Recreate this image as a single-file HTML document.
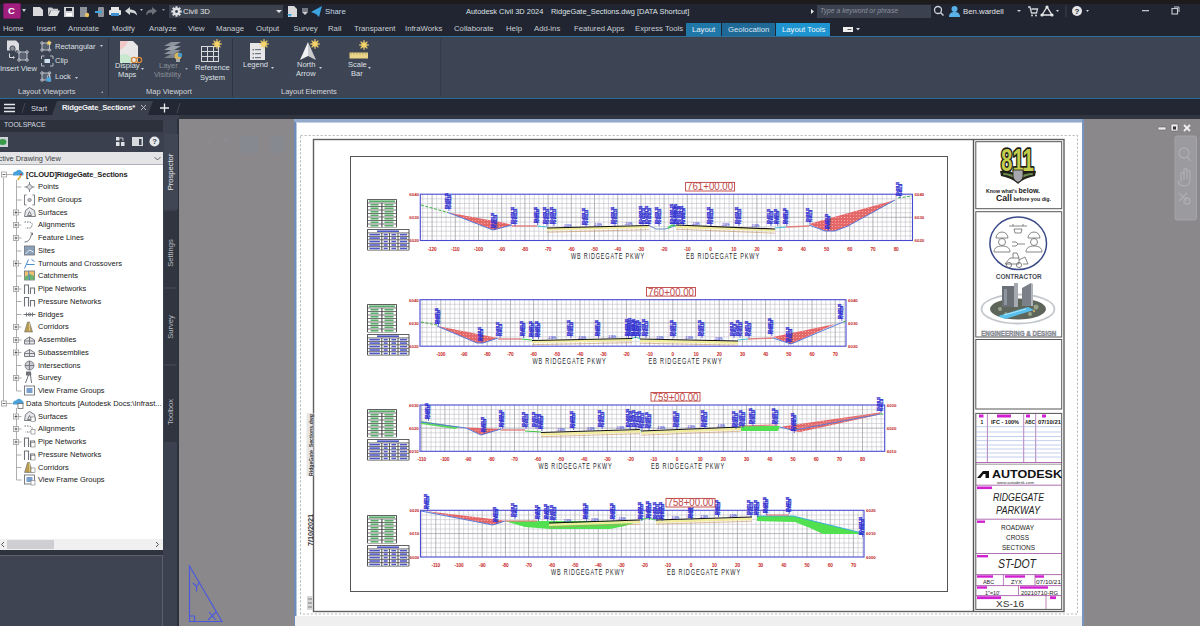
<!DOCTYPE html><html><head><meta charset="utf-8"><style>
*{margin:0;padding:0;box-sizing:border-box}
html,body{width:1200px;height:626px;overflow:hidden;background:#8a888b;font-family:"Liberation Sans",sans-serif}
.a{position:absolute}
.t{position:absolute;white-space:nowrap;line-height:1}
svg{overflow:visible}
</style></head><body>
<div class="a" style="left:0px;top:0px;width:1200px;height:4px;background:#1d1b1c;"></div>
<div class="a" style="left:0px;top:4px;width:1200px;height:33px;background:#202531;"></div>
<div class="a" style="left:0px;top:36px;width:1200px;height:1px;background:#2d6f96;"></div>
<div class="a" style="left:0px;top:37px;width:1200px;height:61px;background:#3d4453;"></div>
<div class="a" style="left:0px;top:97.5px;width:1200px;height:1.5px;background:#2b6a92;"></div>
<div class="a" style="left:0px;top:99px;width:1200px;height:17px;background:#222733;"></div>
<div class="a" style="left:0px;top:115px;width:179px;height:5px;background:#3a404d;"></div>
<div class="a" style="left:179px;top:115px;width:1021px;height:4px;background:#30353f;"></div>
<div class="a" style="left:4px;top:4px;width:16px;height:14px;background:#a01f7c;border-radius:1px;box-shadow:0 0 0 1px #7a1868"></div>
<div class="t" style="left:8px;top:6px;font-size:9.5px;color:#ffffff;font-weight:bold;font-style:normal;">C</div>
<svg class="a" style="left:0;top:0" width="1200" height="22"><path d="M22 9h4l-2 3z" fill="#c9ccd2"/><path d="M33 7h7l3 3v6h-10z" fill="#d9d9db"/><path d="M48 7.5h4l1.2 1.2h4.8v2h-7.5l-2.5 5.3z" fill="#c9cacd"/><path d="M48.5 16l2.7-5.5h8.8l-2.7 5.5z" fill="#e2e3e5"/><rect x="64" y="7" width="10" height="10" fill="#cfd0d3"/><rect x="66" y="8" width="6" height="3" fill="#202531"/><rect x="66" y="13" width="6" height="3" fill="#ffffff"/><rect x="80" y="7" width="7" height="10" fill="#8e9198"/><circle cx="87" cy="15" r="2.2" fill="#e8c060"/><rect x="98" y="7" width="6" height="10" rx="1" fill="#8e9198"/><path d="M95 11h5v-1.5l2 2.5-2 2.5v-1.5h-5z" fill="#3aa3e0"/><rect x="111" y="7" width="8" height="3" fill="#e6e6e6"/><rect x="109" y="10" width="12" height="5" rx="1" fill="#e6e6e6"/><rect x="111" y="13" width="8" height="3" fill="#3c8fd0"/><path d="M125 11l5-4v2.5c4 0 7 2 7 6-1.5-2-3.5-3-7-3v2.5z" fill="#d2d4d8"/><path d="M140 9h3l-1.5 2z" fill="#b8bcc4"/><path d="M157 11l-5-4v2.5c-4 0-6 2-6 6 1.5-2 3-3 6-3v2.5z" fill="#6c7078"/><path d="M162 9h3l-1.5 2z" fill="#8c9098"/></svg>
<div class="a" style="left:169px;top:5px;width:114px;height:13px;background:#3a404c;"></div>
<svg class="a" style="left:170px;top:5px" width="14" height="13"><g transform="translate(6.5 6.5)" fill="#e0e2e6"><circle r="3.4"/><rect x="-1.1" y="-5.2" width="2.2" height="3" transform="rotate(0)"/><rect x="-1.1" y="-5.2" width="2.2" height="3" transform="rotate(45)"/><rect x="-1.1" y="-5.2" width="2.2" height="3" transform="rotate(90)"/><rect x="-1.1" y="-5.2" width="2.2" height="3" transform="rotate(135)"/><rect x="-1.1" y="-5.2" width="2.2" height="3" transform="rotate(180)"/><rect x="-1.1" y="-5.2" width="2.2" height="3" transform="rotate(225)"/><rect x="-1.1" y="-5.2" width="2.2" height="3" transform="rotate(270)"/><rect x="-1.1" y="-5.2" width="2.2" height="3" transform="rotate(315)"/><circle r="1.4" fill="#3a404c"/></g></svg>
<div class="t" style="left:183px;top:7.5px;font-size:7.8px;color:#e2e4e8;font-weight:normal;font-style:normal;">Civil 3D</div>
<svg class="a" style="left:0;top:0" width="1200" height="22"><path d="M276 10h6l-3 3z" fill="#dfe1e5"/><path d="M288 6h6l3 3v8h-9z" fill="#d9d9db"/><path d="M287 14h5l-2 3z" fill="#3aa3e0"/><path d="M302 9h6M302 11h6" stroke="#c8ccd2" stroke-width="1"/><path d="M302 12h6l-3 3z" fill="#c8ccd2"/><path d="M311 12l11-6-3 11-3-3z" fill="#3aa3e0"/><path d="M811 9v5l3-2.5z" fill="#e8e8e8"/><circle cx="938" cy="10" r="3.5" fill="none" stroke="#cfd2d8" stroke-width="1.3"/><path d="M940.5 12.5l3 3" stroke="#cfd2d8" stroke-width="1.5"/><circle cx="954.5" cy="9" r="3" fill="#5ab0e8"/><path d="M949 17c0-4 2.5-5 5.5-5s5.5 1 5.5 5z" fill="#5ab0e8"/><path d="M1017 10h4l-2 2z" fill="#cfd2d8"/><path d="M1028 7h2l1.5 6h5l1-4h-6" stroke="#cfd2d8" stroke-width="1.3" fill="none"/><circle cx="1032" cy="15.5" r="1" fill="#cfd2d8"/><circle cx="1036" cy="15.5" r="1" fill="#cfd2d8"/><path d="M1047 7l-5 8h10z" stroke="#e6e6e6" stroke-width="1.4" fill="none"/><circle cx="1047" cy="7" r="1.6" fill="#e6e6e6"/><circle cx="1042" cy="15" r="1.6" fill="#e6e6e6"/><circle cx="1052" cy="15" r="1.6" fill="#e6e6e6"/><path d="M1056 10h3l-1.5 2z" fill="#cfd2d8"/><rect x="1065.5" y="5" width="1" height="12" fill="#3e4350"/><circle cx="1077" cy="11" r="5" fill="#e6e6e6"/><path d="M1086 10h3l-1.5 2z" fill="#cfd2d8"/><rect x="1142" y="10" width="7" height="1.3" fill="#c0c4ca"/><rect x="1172" y="8.5" width="5.5" height="5.5" fill="none" stroke="#c8ccd2" stroke-width="1.1"/><path d="M1174 7h5v5" fill="none" stroke="#c8ccd2" stroke-width="1"/></svg>
<div class="t" style="left:1074.6px;top:7.5px;font-size:8px;color:#202531;font-weight:bold;font-style:normal;">?</div>
<div class="t" style="left:325px;top:7.5px;font-size:7.8px;color:#c4d6e6;font-weight:normal;font-style:normal;">Share</div>
<div class="t" style="left:466px;top:7.5px;font-size:7.45px;color:#dfe2e6;font-weight:normal;font-style:normal;">Autodesk Civil 3D 2024</div>
<div class="t" style="left:551px;top:7.5px;font-size:7.45px;color:#dfe2e6;font-weight:normal;font-style:normal;">RidgeGate_Sections.dwg [DATA Shortcut]</div>
<div class="a" style="left:817px;top:5px;width:114px;height:13px;background:#3b414e;"></div>
<div class="t" style="left:820px;top:7.8px;font-size:6.8px;color:#8c929e;font-weight:normal;font-style:italic;">Type a keyword or phrase</div>
<div class="t" style="left:963px;top:7.5px;font-size:7.8px;color:#e2e4e8;font-weight:normal;font-style:normal;">Ben.wardell</div>
<div class="t" style="left:3px;top:25px;font-size:7.75px;color:#c9cdd4;font-weight:normal;font-style:normal;">Home</div>
<div class="t" style="left:36.5px;top:25px;font-size:7.75px;color:#c9cdd4;font-weight:normal;font-style:normal;">Insert</div>
<div class="t" style="left:68px;top:25px;font-size:7.75px;color:#c9cdd4;font-weight:normal;font-style:normal;">Annotate</div>
<div class="t" style="left:112px;top:25px;font-size:7.75px;color:#c9cdd4;font-weight:normal;font-style:normal;">Modify</div>
<div class="t" style="left:149px;top:25px;font-size:7.75px;color:#c9cdd4;font-weight:normal;font-style:normal;">Analyze</div>
<div class="t" style="left:188px;top:25px;font-size:7.75px;color:#c9cdd4;font-weight:normal;font-style:normal;">View</div>
<div class="t" style="left:216px;top:25px;font-size:7.75px;color:#c9cdd4;font-weight:normal;font-style:normal;">Manage</div>
<div class="t" style="left:256px;top:25px;font-size:7.75px;color:#c9cdd4;font-weight:normal;font-style:normal;">Output</div>
<div class="t" style="left:293.5px;top:25px;font-size:7.75px;color:#c9cdd4;font-weight:normal;font-style:normal;">Survey</div>
<div class="t" style="left:328px;top:25px;font-size:7.75px;color:#c9cdd4;font-weight:normal;font-style:normal;">Rail</div>
<div class="t" style="left:354px;top:25px;font-size:7.75px;color:#c9cdd4;font-weight:normal;font-style:normal;">Transparent</div>
<div class="t" style="left:405px;top:25px;font-size:7.75px;color:#c9cdd4;font-weight:normal;font-style:normal;">InfraWorks</div>
<div class="t" style="left:454px;top:25px;font-size:7.75px;color:#c9cdd4;font-weight:normal;font-style:normal;">Collaborate</div>
<div class="t" style="left:506px;top:25px;font-size:7.75px;color:#c9cdd4;font-weight:normal;font-style:normal;">Help</div>
<div class="t" style="left:534px;top:25px;font-size:7.75px;color:#c9cdd4;font-weight:normal;font-style:normal;">Add-ins</div>
<div class="t" style="left:574px;top:25px;font-size:7.75px;color:#c9cdd4;font-weight:normal;font-style:normal;">Featured Apps</div>
<div class="t" style="left:635px;top:25px;font-size:7.75px;color:#c9cdd4;font-weight:normal;font-style:normal;">Express Tools</div>
<div class="a" style="left:686px;top:22.5px;width:35px;height:13px;background:#1f77a8;"></div>
<div class="a" style="left:722px;top:22.5px;width:53px;height:13px;background:#1f6997;"></div>
<div class="a" style="left:776px;top:22.5px;width:54px;height:13px;background:#1e95d0;"></div>
<div class="t" style="left:692px;top:25.5px;font-size:7.75px;color:#e8f0f6;font-weight:normal;font-style:normal;">Layout</div>
<div class="t" style="left:728px;top:25.5px;font-size:7.75px;color:#d8e4ee;font-weight:normal;font-style:normal;">Geolocation</div>
<div class="t" style="left:782px;top:25.5px;font-size:7.75px;color:#eef6fb;font-weight:normal;font-style:normal;">Layout Tools</div>
<div class="a" style="left:843px;top:27px;width:10px;height:5px;background:#f0f0f0;"></div>
<svg class="a" style="left:845px;top:26px" width="16" height="8"><path d="M2.5 3.5h4" stroke="#333" stroke-width="0.8"/><path d="M11 2h4l-2 2.5z" fill="#d6d9de"/></svg>
<div class="a" style="left:108px;top:38px;width:1px;height:59px;background:#2e3440;"></div>
<div class="a" style="left:232px;top:38px;width:1px;height:59px;background:#2e3440;"></div>
<div class="a" style="left:440px;top:38px;width:1px;height:59px;background:#343a47;"></div>
<svg class="a" style="left:0;top:36px" width="480" height="62"><path d="M7 4.5h9l3 3v7h-12z" fill="#dcdde0"/><circle cx="12.5" cy="12.5" r="2.6" fill="#8a9098" stroke="#3b4251" stroke-width="0.9"/><path d="M14.5 14.5l2 2" stroke="#8a9098" stroke-width="1"/><path d="M9.5 17.5v4h4" stroke="#d8d9dc" stroke-width="1" fill="none"/><path d="M13 20l2 1.5-2 1.5z" fill="#d8d9dc"/><rect x="19" y="16" width="8" height="8" fill="#5a6170" stroke="#b8bcc4" stroke-width="1"/><circle cx="19" cy="16" r="1.3" fill="none" stroke="#b8bcc4" stroke-width="0.9"/><circle cx="27" cy="16" r="1.3" fill="none" stroke="#b8bcc4" stroke-width="0.9"/><circle cx="19" cy="24" r="1.3" fill="none" stroke="#b8bcc4" stroke-width="0.9"/><circle cx="27" cy="24" r="1.3" fill="none" stroke="#b8bcc4" stroke-width="0.9"/><rect x="42" y="7" width="7.5" height="7" fill="#5a6170" stroke="#b8bcc4" stroke-width="1"/><circle cx="42" cy="7" r="1.3" fill="none" stroke="#b8bcc4" stroke-width="0.9"/><circle cx="49.5" cy="7" r="1.3" fill="none" stroke="#b8bcc4" stroke-width="0.9"/><circle cx="42" cy="14" r="1.3" fill="none" stroke="#b8bcc4" stroke-width="0.9"/><circle cx="49.5" cy="14" r="1.3" fill="none" stroke="#b8bcc4" stroke-width="0.9"/><path d="M49 4l0.8 1.8 1.9 0.2-1.4 1.3 0.4 1.9-1.7-1-1.7 1 0.4-1.9-1.4-1.3 1.9-0.2z" fill="#f3d36a"/><path d="M41.5 23v-3h3M50 20h3v3M53 27v3h-3M44.5 30h-3v-3" stroke="#b8bcc4" stroke-width="1" fill="none"/><rect x="44.5" y="23" width="5.5" height="4" fill="#cfe0f0"/><rect x="42" y="37" width="7.5" height="7" fill="#5a6170" stroke="#b8bcc4" stroke-width="1"/><circle cx="42" cy="37" r="1.3" fill="none" stroke="#b8bcc4" stroke-width="0.9"/><circle cx="49.5" cy="37" r="1.3" fill="none" stroke="#b8bcc4" stroke-width="0.9"/><circle cx="42" cy="44" r="1.3" fill="none" stroke="#b8bcc4" stroke-width="0.9"/><circle cx="49.5" cy="44" r="1.3" fill="none" stroke="#b8bcc4" stroke-width="0.9"/><rect x="46.5" y="41.5" width="4.5" height="4" fill="#4aa8e0"/><path d="M47.5 41.5v-1.3a1.3 1.3 0 0 1 2.6 0v1.3" stroke="#cfd2d8" fill="none" stroke-width="0.8"/><path d="M100 9h3l-1.5 2z" fill="#c9ccd2"/><path d="M75 41h3l-1.5 2z" fill="#c9ccd2"/><path d="M101 57l2-2v2z" fill="#aab"/><path d="M120 5h13l5 5v17h-18z" fill="#e8e6e6"/><path d="M120 5h8c-1 4-4 7-8 9z" fill="#f1c8c8"/><path d="M120 19c4-2 8-1 11 2v6h-11z" fill="#c8e8d0"/><circle cx="134" cy="24" r="2.6" fill="none" stroke="#d68a40" stroke-width="1.3"/><circle cx="139" cy="24" r="2.6" fill="none" stroke="#d68a40" stroke-width="1.3"/><path d="M141 32h3l-1.5 2z" fill="#c9ccd2"/><path d="M164 10l7-4h10l-7 4z" fill="#8d939c"/><path d="M164 14l7-4h10l-7 4z" fill="#9ba1aa"/><path d="M164 18l7-4h10l-7 4z" fill="#8d939c"/><path d="M164 22l7-4h10l-7 4z" fill="#7c828c"/><circle cx="178" cy="20" r="3.5" fill="#d8b45a"/><circle cx="180" cy="19" r="2.2" fill="#4a9ad0"/><rect x="176" y="23" width="4" height="3" fill="#aaa"/><path d="M185 32h3l-1.5 2z" fill="#9ca0a8"/><g stroke="#d8d9dc" stroke-width="1" fill="none"><rect x="201.5" y="10.5" width="17" height="15"/><path d="M201.5 15.5h17M201.5 20.5h17M207.5 10.5v15M213.5 10.5v15"/></g><g transform="translate(217 8)" fill="#f3d36a"><circle r="2.8"/><rect x="-0.6" y="-4.8" width="1.2" height="2.4" transform="rotate(0)"/><rect x="-0.6" y="-4.8" width="1.2" height="2.4" transform="rotate(45)"/><rect x="-0.6" y="-4.8" width="1.2" height="2.4" transform="rotate(90)"/><rect x="-0.6" y="-4.8" width="1.2" height="2.4" transform="rotate(135)"/><rect x="-0.6" y="-4.8" width="1.2" height="2.4" transform="rotate(180)"/><rect x="-0.6" y="-4.8" width="1.2" height="2.4" transform="rotate(225)"/><rect x="-0.6" y="-4.8" width="1.2" height="2.4" transform="rotate(270)"/><rect x="-0.6" y="-4.8" width="1.2" height="2.4" transform="rotate(315)"/></g><path d="M250 7h12l3 3v14h-15z" fill="#e6e6e8"/><g fill="#707680"><rect x="252.5" y="13" width="1.5" height="1.5"/><rect x="255" y="13" width="6" height="1.2"/><rect x="252.5" y="17" width="1.5" height="1.5"/><rect x="255" y="17" width="6" height="1.2"/><rect x="252.5" y="21" width="1.5" height="1.5"/><rect x="255" y="21" width="6" height="1.2"/></g><g transform="translate(264 8)" fill="#f3d36a"><circle r="2.8"/><rect x="-0.6" y="-4.8" width="1.2" height="2.4" transform="rotate(0)"/><rect x="-0.6" y="-4.8" width="1.2" height="2.4" transform="rotate(45)"/><rect x="-0.6" y="-4.8" width="1.2" height="2.4" transform="rotate(90)"/><rect x="-0.6" y="-4.8" width="1.2" height="2.4" transform="rotate(135)"/><rect x="-0.6" y="-4.8" width="1.2" height="2.4" transform="rotate(180)"/><rect x="-0.6" y="-4.8" width="1.2" height="2.4" transform="rotate(225)"/><rect x="-0.6" y="-4.8" width="1.2" height="2.4" transform="rotate(270)"/><rect x="-0.6" y="-4.8" width="1.2" height="2.4" transform="rotate(315)"/></g><path d="M271 31h3l-1.5 2z" fill="#c9ccd2"/><path d="M308 6l-8 18 8-4z" fill="#f2f2f4"/><path d="M308 6l8 18-8-4z" fill="#c8cace"/><g transform="translate(315 8)" fill="#f3d36a"><circle r="2.8"/><rect x="-0.6" y="-4.8" width="1.2" height="2.4" transform="rotate(0)"/><rect x="-0.6" y="-4.8" width="1.2" height="2.4" transform="rotate(45)"/><rect x="-0.6" y="-4.8" width="1.2" height="2.4" transform="rotate(90)"/><rect x="-0.6" y="-4.8" width="1.2" height="2.4" transform="rotate(135)"/><rect x="-0.6" y="-4.8" width="1.2" height="2.4" transform="rotate(180)"/><rect x="-0.6" y="-4.8" width="1.2" height="2.4" transform="rotate(225)"/><rect x="-0.6" y="-4.8" width="1.2" height="2.4" transform="rotate(270)"/><rect x="-0.6" y="-4.8" width="1.2" height="2.4" transform="rotate(315)"/></g><path d="M319 31h3l-1.5 2z" fill="#c9ccd2"/><rect x="349.5" y="16.5" width="18.5" height="6" fill="#ead58a"/><path d="M351 16.5v2M354 16.5v2M357 16.5v2M360 16.5v2M363 16.5v2M366 16.5v2" stroke="#8a7a40" stroke-width="0.6"/><g transform="translate(364 9)" fill="#f3d36a"><circle r="2.8"/><rect x="-0.6" y="-4.8" width="1.2" height="2.4" transform="rotate(0)"/><rect x="-0.6" y="-4.8" width="1.2" height="2.4" transform="rotate(45)"/><rect x="-0.6" y="-4.8" width="1.2" height="2.4" transform="rotate(90)"/><rect x="-0.6" y="-4.8" width="1.2" height="2.4" transform="rotate(135)"/><rect x="-0.6" y="-4.8" width="1.2" height="2.4" transform="rotate(180)"/><rect x="-0.6" y="-4.8" width="1.2" height="2.4" transform="rotate(225)"/><rect x="-0.6" y="-4.8" width="1.2" height="2.4" transform="rotate(270)"/><rect x="-0.6" y="-4.8" width="1.2" height="2.4" transform="rotate(315)"/></g><path d="M368 31h3l-1.5 2z" fill="#c9ccd2"/></svg>
<div class="t" style="left:0px;top:64.5px;font-size:7.5px;color:#dde0e5;font-weight:normal;font-style:normal;">Insert View</div>
<div class="t" style="left:55px;top:42.5px;font-size:7.5px;color:#dde0e5;font-weight:normal;font-style:normal;">Rectangular</div>
<div class="t" style="left:55px;top:57.3px;font-size:7.5px;color:#dde0e5;font-weight:normal;font-style:normal;">Clip</div>
<div class="t" style="left:55px;top:72.8px;font-size:7.5px;color:#dde0e5;font-weight:normal;font-style:normal;">Lock</div>
<div class="t" style="left:18px;top:88.2px;font-size:7.5px;color:#d3d6dc;font-weight:normal;font-style:normal;">Layout Viewports</div>
<div class="t" style="left:115px;top:62.4px;font-size:7.5px;color:#dde0e5;font-weight:normal;font-style:normal;">Display</div>
<div class="t" style="left:118px;top:71.4px;font-size:7.5px;color:#dde0e5;font-weight:normal;font-style:normal;">Maps</div>
<div class="t" style="left:159px;top:62.4px;font-size:7.5px;color:#8a9099;font-weight:normal;font-style:normal;">Layer</div>
<div class="t" style="left:154px;top:71.4px;font-size:7.5px;color:#8a9099;font-weight:normal;font-style:normal;">Visibility</div>
<div class="t" style="left:195px;top:64.4px;font-size:7.5px;color:#dde0e5;font-weight:normal;font-style:normal;">Reference</div>
<div class="t" style="left:200px;top:73.8px;font-size:7.5px;color:#dde0e5;font-weight:normal;font-style:normal;">System</div>
<div class="t" style="left:146px;top:88.2px;font-size:7.5px;color:#d3d6dc;font-weight:normal;font-style:normal;">Map Viewport</div>
<div class="t" style="left:243px;top:60.8px;font-size:7.5px;color:#dde0e5;font-weight:normal;font-style:normal;">Legend</div>
<div class="t" style="left:297px;top:60.8px;font-size:7.5px;color:#dde0e5;font-weight:normal;font-style:normal;">North</div>
<div class="t" style="left:296px;top:70.2px;font-size:7.5px;color:#dde0e5;font-weight:normal;font-style:normal;">Arrow</div>
<div class="t" style="left:348px;top:60.8px;font-size:7.5px;color:#dde0e5;font-weight:normal;font-style:normal;">Scale</div>
<div class="t" style="left:351px;top:70.2px;font-size:7.5px;color:#dde0e5;font-weight:normal;font-style:normal;">Bar</div>
<div class="t" style="left:281px;top:88.2px;font-size:7.5px;color:#d3d6dc;font-weight:normal;font-style:normal;">Layout Elements</div>
<svg class="a" style="left:0;top:99px" width="200" height="17"><path d="M4 5.5h11M4 9h11M4 12.5h11" stroke="#e4e6ea" stroke-width="1.3"/><path d="M22 14l3-10" stroke="#4a505c" stroke-width="0.8"/><path d="M52 16l5-14h96l-5 14z" fill="#3a404c"/><path d="M141 6l5 5M146 6l-5 5" stroke="#b8bcc4" stroke-width="1"/><path d="M160 9h9M164.5 4.5v9" stroke="#eceef0" stroke-width="1.3"/><path d="M177 14l3-10" stroke="#4a505c" stroke-width="0.8"/></svg>
<div class="t" style="left:31px;top:104.5px;font-size:7.6px;color:#d8dbe0;font-weight:normal;font-style:normal;">Start</div>
<div class="t" style="left:62px;top:104px;font-size:7.7px;color:#f2f3f5;font-weight:bold;font-style:normal;letter-spacing:-0.25px">RidgeGate_Sections*</div>
<svg class="a" style="left:0;top:0" width="300" height="200"><g fill="#858a94" opacity="0.6"><rect x="240" y="136" width="18" height="17"/><rect x="271" y="136" width="13" height="17"/></g><g fill="none" stroke="#8f9098" stroke-width="1.2" opacity="0.7"><path d="M207 140l3 3M223 143l4-4 3 3"/></g></svg>
<svg class="a" style="left:0;top:0" width="1200" height="626"><g fill="none" stroke="#4858e0" stroke-width="1.1"><path d="M189.5 566v55.5h32.5z"/><path d="M189.5 616h5v5.5"/><path d="M193 583l3.5 3.5 3.5-4.5M196.5 586.5v5"/><path d="M208 620l8-8M209 612l7 8"/></g></svg>
<svg class="a" style="left:1150px;top:120px" width="50" height="110"><rect x="8" y="7" width="8" height="3" rx="1" fill="#e8e8ea" stroke="#555" stroke-width="0.5"/><rect x="21" y="4" width="7" height="7" rx="1" fill="#e8e8ea" stroke="#555" stroke-width="0.5"/><rect x="23" y="6.5" width="3" height="3" fill="#333"/><path d="M34 5l6 6M40 5l-6 6" stroke="#f0f0f2" stroke-width="1.8"/><rect x="25" y="16" width="21.5" height="84" rx="2" fill="#9b9a9f" stroke="#a9a8ad" stroke-width="0.8"/><g fill="none" stroke="#aeadb2" stroke-width="1.3"><circle cx="34" cy="33" r="5"/><path d="M37 37l4 4"/><path d="M31 62v-8a1.5 1.5 0 0 1 3 0v6M34 59v-9a1.5 1.5 0 0 1 3 0v9M37 59v-7a1.5 1.5 0 0 1 3 0v8c0 4-3 6-6 6s-5-2-6-5"/><path d="M29 73l8 8M37 73l-8 8"/><circle cx="37" cy="81" r="3"/></g></svg>
<div class="a" style="left:294px;top:119px;width:2px;height:507px;background:#6d8cbc;"></div>
<div class="a" style="left:294px;top:119px;width:789px;height:3px;background:#94a9ce;"></div>
<div class="a" style="left:1082px;top:119px;width:2px;height:507px;background:#7895c0;"></div>
<div class="a" style="left:296px;top:122px;width:786px;height:504px;background:#ffffff;"></div>
<div class="a" style="left:296px;top:122px;width:1px;height:504px;background:#b4c6e0;"></div>
<div class="a" style="left:296px;top:122px;width:786px;height:1px;background:#c4d2e6;"></div>
<div class="a" style="left:295px;top:616px;width:787px;height:10px;background:#efeff0;"></div>
<svg class="a" style="left:0;top:0" width="1200" height="626" font-family="Liberation Sans"><defs><pattern id="hatch" width="3" height="3" patternUnits="userSpaceOnUse"><circle cx="1.5" cy="1.5" r="0.6" fill="#ffb0b0"/></pattern></defs><rect x="300.5" y="135.5" width="777" height="478.5" fill="none" stroke="#bcbcbc" stroke-width="1.1" stroke-dasharray="2.2 1.8"/><rect x="313.5" y="139.5" width="750.5" height="472" fill="none" stroke="#606060" stroke-width="1.4"/><rect x="350.5" y="156.5" width="597" height="435" fill="none" stroke="#555" stroke-width="1"/><path d="M973.5 139.5V611.5" stroke="#555" stroke-width="1.4"/><rect x="306.5" y="413" width="7" height="63" fill="#e6e6e6"/><text transform="translate(312.6 476) rotate(-90)" font-size="5.6" fill="#333" textLength="62" lengthAdjust="spacingAndGlyphs" font-weight="bold">RidgeGate_Sections.dwg</text><text transform="translate(313 546) rotate(-90)" font-size="6.5" fill="#333" textLength="32" lengthAdjust="spacingAndGlyphs" font-weight="bold">7/10/2021</text><rect x="307" y="596" width="6" height="14" fill="#d8d8d8"/><path d="M308 599h4M308 603h4M308 607h4" stroke="#666" stroke-width="0.8"/><path d="M422.8 194.2V240.5M427.5 194.2V240.5M436.7 194.2V240.5M441.4 194.2V240.5M446.0 194.2V240.5M450.7 194.2V240.5M459.9 194.2V240.5M464.6 194.2V240.5M469.2 194.2V240.5M473.9 194.2V240.5M483.1 194.2V240.5M487.8 194.2V240.5M492.4 194.2V240.5M497.1 194.2V240.5M506.3 194.2V240.5M511.0 194.2V240.5M515.6 194.2V240.5M520.3 194.2V240.5M529.5 194.2V240.5M534.2 194.2V240.5M538.8 194.2V240.5M543.5 194.2V240.5M552.7 194.2V240.5M557.4 194.2V240.5M562.0 194.2V240.5M566.7 194.2V240.5M575.9 194.2V240.5M580.6 194.2V240.5M585.2 194.2V240.5M589.9 194.2V240.5M599.1 194.2V240.5M603.8 194.2V240.5M608.4 194.2V240.5M613.1 194.2V240.5M622.3 194.2V240.5M627.0 194.2V240.5M631.6 194.2V240.5M636.3 194.2V240.5M645.5 194.2V240.5M650.2 194.2V240.5M654.8 194.2V240.5M659.5 194.2V240.5M668.7 194.2V240.5M673.4 194.2V240.5M678.0 194.2V240.5M682.7 194.2V240.5M691.9 194.2V240.5M696.6 194.2V240.5M701.2 194.2V240.5M705.9 194.2V240.5M715.1 194.2V240.5M719.8 194.2V240.5M724.4 194.2V240.5M729.1 194.2V240.5M738.3 194.2V240.5M743.0 194.2V240.5M747.6 194.2V240.5M752.3 194.2V240.5M761.5 194.2V240.5M766.2 194.2V240.5M770.8 194.2V240.5M775.5 194.2V240.5M784.7 194.2V240.5M789.4 194.2V240.5M794.0 194.2V240.5M798.7 194.2V240.5M807.9 194.2V240.5M812.6 194.2V240.5M817.2 194.2V240.5M821.9 194.2V240.5M831.1 194.2V240.5M835.8 194.2V240.5M840.4 194.2V240.5M845.1 194.2V240.5M854.3 194.2V240.5M859.0 194.2V240.5M863.6 194.2V240.5M868.3 194.2V240.5M877.5 194.2V240.5M882.2 194.2V240.5M886.8 194.2V240.5M891.5 194.2V240.5M900.7 194.2V240.5M905.4 194.2V240.5M910.0 194.2V240.5M420.3 198.8H912.5M420.3 203.5H912.5M420.3 208.1H912.5M420.3 212.7H912.5M420.3 222.0H912.5M420.3 226.6H912.5M420.3 231.2H912.5M420.3 235.9H912.5" stroke="#bcbcc4" stroke-width="0.55"/><path d="M432.1 194.2V240.5M455.3 194.2V240.5M478.5 194.2V240.5M501.7 194.2V240.5M524.9 194.2V240.5M548.1 194.2V240.5M571.3 194.2V240.5M594.5 194.2V240.5M617.7 194.2V240.5M640.9 194.2V240.5M664.1 194.2V240.5M687.3 194.2V240.5M710.5 194.2V240.5M733.7 194.2V240.5M756.9 194.2V240.5M780.1 194.2V240.5M803.3 194.2V240.5M826.5 194.2V240.5M849.7 194.2V240.5M872.9 194.2V240.5M896.1 194.2V240.5M420.3 217.3H912.5" stroke="#96969f" stroke-width="0.7"/><rect x="420.3" y="194.2" width="492.2" height="46.30000000000001" fill="none" stroke="#4a4ad0" stroke-width="1.1"/><text x="409.3" y="196.0" font-size="4.4" fill="#c02828" font-weight="bold" font-family="Liberation Sans">6040</text><text x="914.5" y="196.0" font-size="4.4" fill="#c02828" font-weight="bold" font-family="Liberation Sans">6040</text><text x="409.3" y="219.2" font-size="4.4" fill="#c02828" font-weight="bold" font-family="Liberation Sans">6030</text><text x="914.5" y="219.2" font-size="4.4" fill="#c02828" font-weight="bold" font-family="Liberation Sans">6030</text><text x="409.3" y="242.3" font-size="4.4" fill="#c02828" font-weight="bold" font-family="Liberation Sans">6020</text><text x="914.5" y="242.3" font-size="4.4" fill="#c02828" font-weight="bold" font-family="Liberation Sans">6020</text><text x="432.1" y="250.5" font-size="4.8" fill="#c82828" text-anchor="middle" font-weight="bold" letter-spacing="-0.2" font-family="Liberation Sans">-120</text><text x="455.3" y="250.5" font-size="4.8" fill="#c82828" text-anchor="middle" font-weight="bold" letter-spacing="-0.2" font-family="Liberation Sans">-110</text><text x="478.5" y="250.5" font-size="4.8" fill="#c82828" text-anchor="middle" font-weight="bold" letter-spacing="-0.2" font-family="Liberation Sans">-100</text><text x="501.7" y="250.5" font-size="4.8" fill="#c82828" text-anchor="middle" font-weight="bold" letter-spacing="-0.2" font-family="Liberation Sans">-90</text><text x="524.9" y="250.5" font-size="4.8" fill="#c82828" text-anchor="middle" font-weight="bold" letter-spacing="-0.2" font-family="Liberation Sans">-80</text><text x="548.1" y="250.5" font-size="4.8" fill="#c82828" text-anchor="middle" font-weight="bold" letter-spacing="-0.2" font-family="Liberation Sans">-70</text><text x="571.3" y="250.5" font-size="4.8" fill="#c82828" text-anchor="middle" font-weight="bold" letter-spacing="-0.2" font-family="Liberation Sans">-60</text><text x="594.5" y="250.5" font-size="4.8" fill="#c82828" text-anchor="middle" font-weight="bold" letter-spacing="-0.2" font-family="Liberation Sans">-50</text><text x="617.7" y="250.5" font-size="4.8" fill="#c82828" text-anchor="middle" font-weight="bold" letter-spacing="-0.2" font-family="Liberation Sans">-40</text><text x="640.9" y="250.5" font-size="4.8" fill="#c82828" text-anchor="middle" font-weight="bold" letter-spacing="-0.2" font-family="Liberation Sans">-30</text><text x="664.1" y="250.5" font-size="4.8" fill="#c82828" text-anchor="middle" font-weight="bold" letter-spacing="-0.2" font-family="Liberation Sans">-20</text><text x="687.3" y="250.5" font-size="4.8" fill="#c82828" text-anchor="middle" font-weight="bold" letter-spacing="-0.2" font-family="Liberation Sans">-10</text><text x="710.5" y="250.5" font-size="4.8" fill="#c82828" text-anchor="middle" font-weight="bold" letter-spacing="-0.2" font-family="Liberation Sans">0</text><text x="733.7" y="250.5" font-size="4.8" fill="#c82828" text-anchor="middle" font-weight="bold" letter-spacing="-0.2" font-family="Liberation Sans">10</text><text x="756.9" y="250.5" font-size="4.8" fill="#c82828" text-anchor="middle" font-weight="bold" letter-spacing="-0.2" font-family="Liberation Sans">20</text><text x="780.1" y="250.5" font-size="4.8" fill="#c82828" text-anchor="middle" font-weight="bold" letter-spacing="-0.2" font-family="Liberation Sans">30</text><text x="803.3" y="250.5" font-size="4.8" fill="#c82828" text-anchor="middle" font-weight="bold" letter-spacing="-0.2" font-family="Liberation Sans">40</text><text x="826.5" y="250.5" font-size="4.8" fill="#c82828" text-anchor="middle" font-weight="bold" letter-spacing="-0.2" font-family="Liberation Sans">50</text><text x="849.7" y="250.5" font-size="4.8" fill="#c82828" text-anchor="middle" font-weight="bold" letter-spacing="-0.2" font-family="Liberation Sans">60</text><text x="872.9" y="250.5" font-size="4.8" fill="#c82828" text-anchor="middle" font-weight="bold" letter-spacing="-0.2" font-family="Liberation Sans">70</text><text x="896.1" y="250.5" font-size="4.8" fill="#c82828" text-anchor="middle" font-weight="bold" letter-spacing="-0.2" font-family="Liberation Sans">80</text><polygon points="448,212.5 505,223 512,225 493,230" fill="#e46868"/><polygon points="448,212.5 505,223 512,225 493,230" fill="url(#hatch)"/><polygon points="809,224 895,200 848,226 835,231 825,231" fill="#e46868"/><polygon points="809,224 895,200 848,226 835,231 825,231" fill="url(#hatch)"/><polygon points="547,228 649,225.5 649,228 547,230.5" fill="#f1eb9c"/><polygon points="676,225 775,229 775,231.5 676,228" fill="#f1eb9c"/><polyline points="421,205 448,212.5" fill="none" stroke="#40b040" stroke-width="1" stroke-dasharray="3 1.5"/><polyline points="448,212.5 493,230 512,225" fill="none" stroke="#5a7ad8" stroke-width="1"/><polyline points="512,226 537,226" fill="none" stroke="#e08080" stroke-width="1.4"/><polyline points="537,226 547,227" fill="none" stroke="#40c0d0" stroke-width="1"/><polyline points="547,228 649,225.5" fill="none" stroke="#111" stroke-width="1.2"/><polyline points="649,225.5 656,229 665,229 672,227 676,225" fill="none" stroke="#6a90c0" stroke-width="1"/><polyline points="668,228 672,225 676,226" fill="none" stroke="#50d060" stroke-width="1.6"/><polyline points="676,225 775,229" fill="none" stroke="#111" stroke-width="1.2"/><polyline points="775,228 786,227" fill="none" stroke="#40c0d0" stroke-width="1"/><polyline points="786,227 809,226" fill="none" stroke="#e08080" stroke-width="1.4"/><polyline points="809,225 825,231 835,231 848,226 895,200" fill="none" stroke="#5a7ad8" stroke-width="1"/><polyline points="898,198 912,196" fill="none" stroke="#40b040" stroke-width="1" stroke-dasharray="3 1.5"/><g font-size="4.2" font-weight="bold" fill="#3434d2" stroke="#3434d2" stroke-width="0.4"><text transform="translate(448.2 209) rotate(-90)" textLength="16" lengthAdjust="spacingAndGlyphs">EG:6031.25</text><text transform="translate(450.6 209) rotate(-90)" textLength="14" lengthAdjust="spacingAndGlyphs">FG 6032.18</text></g><path d="M449 208v3" stroke="#3434d4" stroke-width="0.7"/><g font-size="4.2" font-weight="bold" fill="#3434d2" stroke="#3434d2" stroke-width="0.4"><text transform="translate(494.2 228) rotate(-90)" textLength="15" lengthAdjust="spacingAndGlyphs">EG:6031.25</text><text transform="translate(496.6 228) rotate(-90)" textLength="13" lengthAdjust="spacingAndGlyphs">FG 6032.18</text></g><path d="M495 227v3" stroke="#3434d4" stroke-width="0.7"/><g font-size="4.2" font-weight="bold" fill="#3434d2" stroke="#3434d2" stroke-width="0.4"><text transform="translate(514.2 224) rotate(-90)" textLength="17" lengthAdjust="spacingAndGlyphs">EG:6031.25</text><text transform="translate(516.6 224) rotate(-90)" textLength="15" lengthAdjust="spacingAndGlyphs">FG 6032.18</text></g><path d="M515 223v3" stroke="#3434d4" stroke-width="0.7"/><g font-size="4.2" font-weight="bold" fill="#3434d2" stroke="#3434d2" stroke-width="0.4"><text transform="translate(536.7 223) rotate(-90)" textLength="16" lengthAdjust="spacingAndGlyphs">EG:6031.25</text><text transform="translate(539.1 223) rotate(-90)" textLength="14" lengthAdjust="spacingAndGlyphs">FG 6032.18</text></g><path d="M537.5 222v3" stroke="#3434d4" stroke-width="0.7"/><g font-size="4.2" font-weight="bold" fill="#3434d2" stroke="#3434d2" stroke-width="0.4"><text transform="translate(546.2 224) rotate(-90)" textLength="17" lengthAdjust="spacingAndGlyphs">EG:6031.25</text><text transform="translate(548.6 224) rotate(-90)" textLength="15" lengthAdjust="spacingAndGlyphs">FG 6032.18</text></g><path d="M547 223v3" stroke="#3434d4" stroke-width="0.7"/><g font-size="4.2" font-weight="bold" fill="#3434d2" stroke="#3434d2" stroke-width="0.4"><text transform="translate(553.2 224) rotate(-90)" textLength="17" lengthAdjust="spacingAndGlyphs">EG:6031.25</text><text transform="translate(555.6 224) rotate(-90)" textLength="15" lengthAdjust="spacingAndGlyphs">FG 6032.18</text></g><path d="M554 223v3" stroke="#3434d4" stroke-width="0.7"/><g font-size="4.2" font-weight="bold" fill="#3434d2" stroke="#3434d2" stroke-width="0.4"><text transform="translate(585.2 225) rotate(-90)" textLength="17" lengthAdjust="spacingAndGlyphs">EG:6031.25</text><text transform="translate(587.6 225) rotate(-90)" textLength="15" lengthAdjust="spacingAndGlyphs">FG 6032.18</text></g><path d="M586 224v3" stroke="#3434d4" stroke-width="0.7"/><g font-size="4.2" font-weight="bold" fill="#3434d2" stroke="#3434d2" stroke-width="0.4"><text transform="translate(614.2 224) rotate(-90)" textLength="17" lengthAdjust="spacingAndGlyphs">EG:6031.25</text><text transform="translate(616.6 224) rotate(-90)" textLength="15" lengthAdjust="spacingAndGlyphs">FG 6032.18</text></g><path d="M615 223v3" stroke="#3434d4" stroke-width="0.7"/><g font-size="4.2" font-weight="bold" fill="#3434d2" stroke="#3434d2" stroke-width="0.4"><text transform="translate(642.2 224) rotate(-90)" textLength="18" lengthAdjust="spacingAndGlyphs">EG:6031.25</text><text transform="translate(644.6 224) rotate(-90)" textLength="16" lengthAdjust="spacingAndGlyphs">FG 6032.18</text></g><path d="M643 223v3" stroke="#3434d4" stroke-width="0.7"/><g font-size="4.2" font-weight="bold" fill="#3434d2" stroke="#3434d2" stroke-width="0.4"><text transform="translate(648.2 224) rotate(-90)" textLength="18" lengthAdjust="spacingAndGlyphs">EG:6031.25</text><text transform="translate(650.6 224) rotate(-90)" textLength="16" lengthAdjust="spacingAndGlyphs">FG 6032.18</text></g><path d="M649 223v3" stroke="#3434d4" stroke-width="0.7"/><g font-size="4.2" font-weight="bold" fill="#3434d2" stroke="#3434d2" stroke-width="0.4"><text transform="translate(658.2 224) rotate(-90)" textLength="17" lengthAdjust="spacingAndGlyphs">EG:6031.25</text><text transform="translate(660.6 224) rotate(-90)" textLength="15" lengthAdjust="spacingAndGlyphs">FG 6032.18</text></g><path d="M659 223v3" stroke="#3434d4" stroke-width="0.7"/><g font-size="4.2" font-weight="bold" fill="#3434d2" stroke="#3434d2" stroke-width="0.4"><text transform="translate(673.2 224) rotate(-90)" textLength="20" lengthAdjust="spacingAndGlyphs">EG:6031.25</text><text transform="translate(675.6 224) rotate(-90)" textLength="18" lengthAdjust="spacingAndGlyphs">FG 6032.18</text></g><path d="M674 223v3" stroke="#3434d4" stroke-width="0.7"/><g font-size="4.2" font-weight="bold" fill="#3434d2" stroke="#3434d2" stroke-width="0.4"><text transform="translate(677.2 224) rotate(-90)" textLength="20" lengthAdjust="spacingAndGlyphs">EG:6031.25</text><text transform="translate(679.6 224) rotate(-90)" textLength="18" lengthAdjust="spacingAndGlyphs">FG 6032.18</text></g><path d="M678 223v3" stroke="#3434d4" stroke-width="0.7"/><g font-size="4.2" font-weight="bold" fill="#3434d2" stroke="#3434d2" stroke-width="0.4"><text transform="translate(682.6 224) rotate(-90)" textLength="18" lengthAdjust="spacingAndGlyphs">EG:6031.25</text><text transform="translate(685.0 224) rotate(-90)" textLength="16" lengthAdjust="spacingAndGlyphs">FG 6032.18</text></g><path d="M683.4 223v3" stroke="#3434d4" stroke-width="0.7"/><g font-size="4.2" font-weight="bold" fill="#3434d2" stroke="#3434d2" stroke-width="0.4"><text transform="translate(710.2 224) rotate(-90)" textLength="17" lengthAdjust="spacingAndGlyphs">EG:6031.25</text><text transform="translate(712.6 224) rotate(-90)" textLength="15" lengthAdjust="spacingAndGlyphs">FG 6032.18</text></g><path d="M711 223v3" stroke="#3434d4" stroke-width="0.7"/><g font-size="4.2" font-weight="bold" fill="#3434d2" stroke="#3434d2" stroke-width="0.4"><text transform="translate(738.2 224) rotate(-90)" textLength="17" lengthAdjust="spacingAndGlyphs">EG:6031.25</text><text transform="translate(740.6 224) rotate(-90)" textLength="15" lengthAdjust="spacingAndGlyphs">FG 6032.18</text></g><path d="M739 223v3" stroke="#3434d4" stroke-width="0.7"/><g font-size="4.2" font-weight="bold" fill="#3434d2" stroke="#3434d2" stroke-width="0.4"><text transform="translate(770.2 224) rotate(-90)" textLength="15" lengthAdjust="spacingAndGlyphs">EG:6031.25</text><text transform="translate(772.6 224) rotate(-90)" textLength="13" lengthAdjust="spacingAndGlyphs">FG 6032.18</text></g><path d="M771 223v3" stroke="#3434d4" stroke-width="0.7"/><g font-size="4.2" font-weight="bold" fill="#3434d2" stroke="#3434d2" stroke-width="0.4"><text transform="translate(776.9000000000001 224) rotate(-90)" textLength="15" lengthAdjust="spacingAndGlyphs">EG:6031.25</text><text transform="translate(779.3000000000001 224) rotate(-90)" textLength="13" lengthAdjust="spacingAndGlyphs">FG 6032.18</text></g><path d="M777.7 223v3" stroke="#3434d4" stroke-width="0.7"/><g font-size="4.2" font-weight="bold" fill="#3434d2" stroke="#3434d2" stroke-width="0.4"><text transform="translate(786.0 224) rotate(-90)" textLength="16" lengthAdjust="spacingAndGlyphs">EG:6031.25</text><text transform="translate(788.4 224) rotate(-90)" textLength="14" lengthAdjust="spacingAndGlyphs">FG 6032.18</text></g><path d="M786.8 223v3" stroke="#3434d4" stroke-width="0.7"/><g font-size="4.2" font-weight="bold" fill="#3434d2" stroke="#3434d2" stroke-width="0.4"><text transform="translate(809.2 222) rotate(-90)" textLength="14" lengthAdjust="spacingAndGlyphs">EG:6031.25</text><text transform="translate(811.6 222) rotate(-90)" textLength="12" lengthAdjust="spacingAndGlyphs">FG 6032.18</text></g><path d="M810 221v3" stroke="#3434d4" stroke-width="0.7"/><g font-size="4.2" font-weight="bold" fill="#3434d2" stroke="#3434d2" stroke-width="0.4"><text transform="translate(827.7 229) rotate(-90)" textLength="15" lengthAdjust="spacingAndGlyphs">EG:6031.25</text><text transform="translate(830.1 229) rotate(-90)" textLength="13" lengthAdjust="spacingAndGlyphs">FG 6032.18</text></g><path d="M828.5 228v3" stroke="#3434d4" stroke-width="0.7"/><g font-size="4.2" font-weight="bold" fill="#3434d2" stroke="#3434d2" stroke-width="0.4"><text transform="translate(899.2 196) rotate(-90)" textLength="14" lengthAdjust="spacingAndGlyphs">EG:6031.25</text><text transform="translate(901.6 196) rotate(-90)" textLength="12" lengthAdjust="spacingAndGlyphs">FG 6032.18</text></g><path d="M900 195v3" stroke="#3434d4" stroke-width="0.7"/><path d="M547 232.2L649 229.7" stroke="#c89060" stroke-width="0.6"/><text x="563.4" y="226.7" font-size="3.4" font-weight="bold" fill="#3434d2" textLength="8" lengthAdjust="spacingAndGlyphs">-2.00%</text><text x="594.0" y="225.9" font-size="3.4" font-weight="bold" fill="#3434d2" textLength="8" lengthAdjust="spacingAndGlyphs">-2.00%</text><text x="624.6" y="225.2" font-size="3.4" font-weight="bold" fill="#3434d2" textLength="8" lengthAdjust="spacingAndGlyphs">-2.00%</text><path d="M676 229.2L775 233.2" stroke="#c89060" stroke-width="0.6"/><text x="691.8" y="225.0" font-size="3.4" font-weight="bold" fill="#3434d2" textLength="8" lengthAdjust="spacingAndGlyphs">-2.00%</text><text x="721.5" y="226.2" font-size="3.4" font-weight="bold" fill="#3434d2" textLength="8" lengthAdjust="spacingAndGlyphs">-2.00%</text><text x="751.2" y="227.4" font-size="3.4" font-weight="bold" fill="#3434d2" textLength="8" lengthAdjust="spacingAndGlyphs">-2.00%</text><rect x="685.6" y="182.4" width="49" height="8.6" fill="#fff" stroke="#c04040" stroke-width="0.9"/><text x="710.1" y="190.4" font-size="10.2" fill="#c04848" text-anchor="middle" font-family="Liberation Sans" textLength="46" lengthAdjust="spacingAndGlyphs">761+00.00</text><text x="571" y="258.5" font-size="8.4" fill="#2a2a2e" font-family="Liberation Sans" letter-spacing="1.3" textLength="74" lengthAdjust="spacingAndGlyphs">WB  RIDGEGATE  PKWY</text><text x="686" y="258.5" font-size="8.4" fill="#2a2a2e" font-family="Liberation Sans" letter-spacing="1.3" textLength="74" lengthAdjust="spacingAndGlyphs">EB  RIDGEGATE  PKWY</text><rect x="367" y="199" width="30" height="28.5" rx="0.8" fill="#505050"/><rect x="368" y="199.90" width="28" height="2.7" fill="#fff"/><rect x="369" y="200.40" width="26" height="1.7" fill="#5ab06a"/><rect x="368" y="203.40" width="13.3" height="2.7" fill="#fff"/><rect x="382.5" y="203.40" width="13.5" height="2.7" fill="#fff"/><rect x="370.5" y="203.95" width="8" height="1.6" fill="#5ab06a"/><rect x="384.5" y="203.95" width="9" height="1.6" fill="#5ab06a"/><rect x="368" y="206.90" width="13.3" height="2.7" fill="#fff"/><rect x="382.5" y="206.90" width="13.5" height="2.7" fill="#fff"/><rect x="370.5" y="207.45" width="8" height="1.6" fill="#5ab06a"/><rect x="384.5" y="207.45" width="9" height="1.6" fill="#5ab06a"/><rect x="368" y="210.40" width="13.3" height="2.7" fill="#fff"/><rect x="382.5" y="210.40" width="13.5" height="2.7" fill="#fff"/><rect x="370.5" y="210.95" width="8" height="1.6" fill="#5ab06a"/><rect x="384.5" y="210.95" width="9" height="1.6" fill="#5ab06a"/><rect x="368" y="213.90" width="13.3" height="2.7" fill="#fff"/><rect x="382.5" y="213.90" width="13.5" height="2.7" fill="#fff"/><rect x="370.5" y="214.45" width="8" height="1.6" fill="#5ab06a"/><rect x="384.5" y="214.45" width="9" height="1.6" fill="#5ab06a"/><rect x="368" y="217.40" width="13.3" height="2.7" fill="#fff"/><rect x="382.5" y="217.40" width="13.5" height="2.7" fill="#fff"/><rect x="370.5" y="217.95" width="8" height="1.6" fill="#5ab06a"/><rect x="384.5" y="217.95" width="9" height="1.6" fill="#5ab06a"/><rect x="368" y="220.90" width="13.3" height="2.7" fill="#fff"/><rect x="382.5" y="220.90" width="13.5" height="2.7" fill="#fff"/><rect x="370.5" y="221.45" width="8" height="1.6" fill="#5ab06a"/><rect x="384.5" y="221.45" width="9" height="1.6" fill="#5ab06a"/><rect x="368" y="224.40" width="13.3" height="2.7" fill="#fff"/><rect x="382.5" y="224.40" width="13.5" height="2.7" fill="#fff"/><rect x="370.5" y="224.95" width="8" height="1.6" fill="#5ab06a"/><rect x="384.5" y="224.95" width="9" height="1.6" fill="#5ab06a"/><rect x="367" y="229" width="42.5" height="21.5" rx="0.8" fill="#505050"/><rect x="368" y="229.90" width="40.5" height="2.6" fill="#fff"/><rect x="377" y="230.40" width="22" height="1.6" fill="#5058c8"/><rect x="368" y="233.35" width="13.3" height="2.6" fill="#fff"/><rect x="369.4" y="233.85" width="10.5" height="1.6" fill="#5058c8"/><rect x="382.3" y="233.35" width="6.8" height="2.6" fill="#fff"/><rect x="383.7" y="233.85" width="4.0" height="1.6" fill="#5058c8"/><rect x="390" y="233.35" width="7.5" height="2.6" fill="#fff"/><rect x="391.4" y="233.85" width="4.7" height="1.6" fill="#5058c8"/><rect x="398.5" y="233.35" width="10" height="2.6" fill="#fff"/><rect x="399.9" y="233.85" width="7.2" height="1.6" fill="#5058c8"/><rect x="368" y="236.80" width="13.3" height="2.6" fill="#fff"/><rect x="369.4" y="237.30" width="10.5" height="1.6" fill="#5058c8"/><rect x="382.3" y="236.80" width="6.8" height="2.6" fill="#fff"/><rect x="383.7" y="237.30" width="4.0" height="1.6" fill="#5058c8"/><rect x="390" y="236.80" width="7.5" height="2.6" fill="#fff"/><rect x="391.4" y="237.30" width="4.7" height="1.6" fill="#5058c8"/><rect x="398.5" y="236.80" width="10" height="2.6" fill="#fff"/><rect x="399.9" y="237.30" width="7.2" height="1.6" fill="#5058c8"/><rect x="368" y="240.25" width="13.3" height="2.6" fill="#fff"/><rect x="369.4" y="240.75" width="10.5" height="1.6" fill="#5058c8"/><rect x="382.3" y="240.25" width="6.8" height="2.6" fill="#fff"/><rect x="383.7" y="240.75" width="4.0" height="1.6" fill="#5058c8"/><rect x="390" y="240.25" width="7.5" height="2.6" fill="#fff"/><rect x="391.4" y="240.75" width="4.7" height="1.6" fill="#5058c8"/><rect x="398.5" y="240.25" width="10" height="2.6" fill="#fff"/><rect x="399.9" y="240.75" width="7.2" height="1.6" fill="#5058c8"/><rect x="368" y="243.70" width="13.3" height="2.6" fill="#fff"/><rect x="369.4" y="244.20" width="10.5" height="1.6" fill="#5058c8"/><rect x="382.3" y="243.70" width="6.8" height="2.6" fill="#fff"/><rect x="383.7" y="244.20" width="4.0" height="1.6" fill="#5058c8"/><rect x="390" y="243.70" width="7.5" height="2.6" fill="#fff"/><rect x="391.4" y="244.20" width="4.7" height="1.6" fill="#5058c8"/><rect x="398.5" y="243.70" width="10" height="2.6" fill="#fff"/><rect x="399.9" y="244.20" width="7.2" height="1.6" fill="#5058c8"/><rect x="368" y="247.15" width="13.3" height="2.6" fill="#fff"/><rect x="369.4" y="247.65" width="10.5" height="1.6" fill="#5058c8"/><rect x="382.3" y="247.15" width="6.8" height="2.6" fill="#fff"/><rect x="383.7" y="247.65" width="4.0" height="1.6" fill="#5058c8"/><rect x="390" y="247.15" width="7.5" height="2.6" fill="#fff"/><rect x="391.4" y="247.65" width="4.7" height="1.6" fill="#5058c8"/><rect x="398.5" y="247.15" width="10" height="2.6" fill="#fff"/><rect x="399.9" y="247.65" width="7.2" height="1.6" fill="#5058c8"/><path d="M422.2 299.7V346.2M426.9 299.7V346.2M431.5 299.7V346.2M436.2 299.7V346.2M445.4 299.7V346.2M450.1 299.7V346.2M454.7 299.7V346.2M459.4 299.7V346.2M468.6 299.7V346.2M473.3 299.7V346.2M477.9 299.7V346.2M482.6 299.7V346.2M491.8 299.7V346.2M496.5 299.7V346.2M501.1 299.7V346.2M505.8 299.7V346.2M515.0 299.7V346.2M519.7 299.7V346.2M524.3 299.7V346.2M529.0 299.7V346.2M538.2 299.7V346.2M542.9 299.7V346.2M547.5 299.7V346.2M552.2 299.7V346.2M561.4 299.7V346.2M566.1 299.7V346.2M570.7 299.7V346.2M575.4 299.7V346.2M584.6 299.7V346.2M589.3 299.7V346.2M593.9 299.7V346.2M598.6 299.7V346.2M607.8 299.7V346.2M612.5 299.7V346.2M617.1 299.7V346.2M621.8 299.7V346.2M631.0 299.7V346.2M635.7 299.7V346.2M640.3 299.7V346.2M645.0 299.7V346.2M654.2 299.7V346.2M658.9 299.7V346.2M663.5 299.7V346.2M668.2 299.7V346.2M677.4 299.7V346.2M682.1 299.7V346.2M686.7 299.7V346.2M691.4 299.7V346.2M700.6 299.7V346.2M705.3 299.7V346.2M709.9 299.7V346.2M714.6 299.7V346.2M723.8 299.7V346.2M728.5 299.7V346.2M733.1 299.7V346.2M737.8 299.7V346.2M747.0 299.7V346.2M751.7 299.7V346.2M756.3 299.7V346.2M761.0 299.7V346.2M770.2 299.7V346.2M774.9 299.7V346.2M779.5 299.7V346.2M784.2 299.7V346.2M793.4 299.7V346.2M798.1 299.7V346.2M802.7 299.7V346.2M807.4 299.7V346.2M816.6 299.7V346.2M821.3 299.7V346.2M825.9 299.7V346.2M830.6 299.7V346.2M839.8 299.7V346.2M844.5 299.7V346.2M420 304.3H846M420 309.0H846M420 313.6H846M420 318.3H846M420 327.6H846M420 332.2H846M420 336.9H846M420 341.6H846" stroke="#bcbcc4" stroke-width="0.55"/><path d="M440.8 299.7V346.2M464.0 299.7V346.2M487.2 299.7V346.2M510.4 299.7V346.2M533.6 299.7V346.2M556.8 299.7V346.2M580.0 299.7V346.2M603.2 299.7V346.2M626.4 299.7V346.2M649.6 299.7V346.2M672.8 299.7V346.2M696.0 299.7V346.2M719.2 299.7V346.2M742.4 299.7V346.2M765.6 299.7V346.2M788.8 299.7V346.2M812.0 299.7V346.2M835.2 299.7V346.2M420 322.9H846" stroke="#96969f" stroke-width="0.7"/><rect x="420" y="299.7" width="426" height="46.5" fill="none" stroke="#4a4ad0" stroke-width="1.1"/><text x="409" y="301.5" font-size="4.4" fill="#c02828" font-weight="bold" font-family="Liberation Sans">6040</text><text x="848" y="301.5" font-size="4.4" fill="#c02828" font-weight="bold" font-family="Liberation Sans">6040</text><text x="409" y="324.8" font-size="4.4" fill="#c02828" font-weight="bold" font-family="Liberation Sans">6030</text><text x="848" y="324.8" font-size="4.4" fill="#c02828" font-weight="bold" font-family="Liberation Sans">6030</text><text x="409" y="348.0" font-size="4.4" fill="#c02828" font-weight="bold" font-family="Liberation Sans">6020</text><text x="848" y="348.0" font-size="4.4" fill="#c02828" font-weight="bold" font-family="Liberation Sans">6020</text><text x="440.8" y="356.2" font-size="4.8" fill="#c82828" text-anchor="middle" font-weight="bold" letter-spacing="-0.2" font-family="Liberation Sans">-100</text><text x="464.0" y="356.2" font-size="4.8" fill="#c82828" text-anchor="middle" font-weight="bold" letter-spacing="-0.2" font-family="Liberation Sans">-90</text><text x="487.2" y="356.2" font-size="4.8" fill="#c82828" text-anchor="middle" font-weight="bold" letter-spacing="-0.2" font-family="Liberation Sans">-80</text><text x="510.4" y="356.2" font-size="4.8" fill="#c82828" text-anchor="middle" font-weight="bold" letter-spacing="-0.2" font-family="Liberation Sans">-70</text><text x="533.6" y="356.2" font-size="4.8" fill="#c82828" text-anchor="middle" font-weight="bold" letter-spacing="-0.2" font-family="Liberation Sans">-60</text><text x="556.8" y="356.2" font-size="4.8" fill="#c82828" text-anchor="middle" font-weight="bold" letter-spacing="-0.2" font-family="Liberation Sans">-50</text><text x="580.0" y="356.2" font-size="4.8" fill="#c82828" text-anchor="middle" font-weight="bold" letter-spacing="-0.2" font-family="Liberation Sans">-40</text><text x="603.2" y="356.2" font-size="4.8" fill="#c82828" text-anchor="middle" font-weight="bold" letter-spacing="-0.2" font-family="Liberation Sans">-30</text><text x="626.4" y="356.2" font-size="4.8" fill="#c82828" text-anchor="middle" font-weight="bold" letter-spacing="-0.2" font-family="Liberation Sans">-20</text><text x="649.6" y="356.2" font-size="4.8" fill="#c82828" text-anchor="middle" font-weight="bold" letter-spacing="-0.2" font-family="Liberation Sans">-10</text><text x="672.8" y="356.2" font-size="4.8" fill="#c82828" text-anchor="middle" font-weight="bold" letter-spacing="-0.2" font-family="Liberation Sans">0</text><text x="696.0" y="356.2" font-size="4.8" fill="#c82828" text-anchor="middle" font-weight="bold" letter-spacing="-0.2" font-family="Liberation Sans">10</text><text x="719.2" y="356.2" font-size="4.8" fill="#c82828" text-anchor="middle" font-weight="bold" letter-spacing="-0.2" font-family="Liberation Sans">20</text><text x="742.4" y="356.2" font-size="4.8" fill="#c82828" text-anchor="middle" font-weight="bold" letter-spacing="-0.2" font-family="Liberation Sans">30</text><text x="765.6" y="356.2" font-size="4.8" fill="#c82828" text-anchor="middle" font-weight="bold" letter-spacing="-0.2" font-family="Liberation Sans">40</text><text x="788.8" y="356.2" font-size="4.8" fill="#c82828" text-anchor="middle" font-weight="bold" letter-spacing="-0.2" font-family="Liberation Sans">50</text><text x="812.0" y="356.2" font-size="4.8" fill="#c82828" text-anchor="middle" font-weight="bold" letter-spacing="-0.2" font-family="Liberation Sans">60</text><text x="835.2" y="356.2" font-size="4.8" fill="#c82828" text-anchor="middle" font-weight="bold" letter-spacing="-0.2" font-family="Liberation Sans">70</text><polygon points="437,326 498,338 483,343 477,343" fill="#e46868"/><polygon points="437,326 498,338 483,343 477,343" fill="url(#hatch)"/><polygon points="773,337 835,324 791,344" fill="#e46868"/><polygon points="773,337 835,324 791,344" fill="url(#hatch)"/><polygon points="532,340.5 632,338.5 632,341 532,343" fill="#f1eb9c"/><polygon points="640,339.5 738,341.5 738,344 640,342" fill="#f1eb9c"/><polyline points="421,322 437,325" fill="none" stroke="#40b040" stroke-width="1" stroke-dasharray="3 1.5"/><polyline points="437,326 477,343 483,343 498,338" fill="none" stroke="#5a7ad8" stroke-width="1"/><polyline points="498,339 521,339" fill="none" stroke="#e08080" stroke-width="1.4"/><polyline points="521,339 532,340" fill="none" stroke="#40c040" stroke-width="1"/><polyline points="532,340.5 632,338.5" fill="none" stroke="#111" stroke-width="1.2"/><polyline points="632,338.5 636,337 640,339" fill="none" stroke="#40c0a0" stroke-width="1"/><polyline points="640,339 738,341" fill="none" stroke="#111" stroke-width="1.2"/><polyline points="738,340 748,339" fill="none" stroke="#40c0d0" stroke-width="1"/><polyline points="748,339 773,338" fill="none" stroke="#e08080" stroke-width="1.4"/><polyline points="773,338 791,344 843,322" fill="none" stroke="#5a7ad8" stroke-width="1"/><polyline points="843,322 846,321" fill="none" stroke="#40b040" stroke-width="1" stroke-dasharray="3 1.5"/><g font-size="4.2" font-weight="bold" fill="#3434d2" stroke="#3434d2" stroke-width="0.4"><text transform="translate(437.7 324) rotate(-90)" textLength="16" lengthAdjust="spacingAndGlyphs">EG:6031.25</text><text transform="translate(440.1 324) rotate(-90)" textLength="14" lengthAdjust="spacingAndGlyphs">FG 6032.18</text></g><path d="M438.5 323v3" stroke="#3434d4" stroke-width="0.7"/><g font-size="4.2" font-weight="bold" fill="#3434d2" stroke="#3434d2" stroke-width="0.4"><text transform="translate(481.0 341) rotate(-90)" textLength="14" lengthAdjust="spacingAndGlyphs">EG:6031.25</text><text transform="translate(483.40000000000003 341) rotate(-90)" textLength="12" lengthAdjust="spacingAndGlyphs">FG 6032.18</text></g><path d="M481.8 340v3" stroke="#3434d4" stroke-width="0.7"/><g font-size="4.2" font-weight="bold" fill="#3434d2" stroke="#3434d2" stroke-width="0.4"><text transform="translate(499.2 336) rotate(-90)" textLength="14" lengthAdjust="spacingAndGlyphs">EG:6031.25</text><text transform="translate(501.6 336) rotate(-90)" textLength="12" lengthAdjust="spacingAndGlyphs">FG 6032.18</text></g><path d="M500 335v3" stroke="#3434d4" stroke-width="0.7"/><g font-size="4.2" font-weight="bold" fill="#3434d2" stroke="#3434d2" stroke-width="0.4"><text transform="translate(522.7 336) rotate(-90)" textLength="15" lengthAdjust="spacingAndGlyphs">EG:6031.25</text><text transform="translate(525.1 336) rotate(-90)" textLength="13" lengthAdjust="spacingAndGlyphs">FG 6032.18</text></g><path d="M523.5 335v3" stroke="#3434d4" stroke-width="0.7"/><g font-size="4.2" font-weight="bold" fill="#3434d2" stroke="#3434d2" stroke-width="0.4"><text transform="translate(531.9000000000001 337) rotate(-90)" textLength="16" lengthAdjust="spacingAndGlyphs">EG:6031.25</text><text transform="translate(534.3000000000001 337) rotate(-90)" textLength="14" lengthAdjust="spacingAndGlyphs">FG 6032.18</text></g><path d="M532.7 336v3" stroke="#3434d4" stroke-width="0.7"/><g font-size="4.2" font-weight="bold" fill="#3434d2" stroke="#3434d2" stroke-width="0.4"><text transform="translate(537.7 337) rotate(-90)" textLength="16" lengthAdjust="spacingAndGlyphs">EG:6031.25</text><text transform="translate(540.1 337) rotate(-90)" textLength="14" lengthAdjust="spacingAndGlyphs">FG 6032.18</text></g><path d="M538.5 336v3" stroke="#3434d4" stroke-width="0.7"/><g font-size="4.2" font-weight="bold" fill="#3434d2" stroke="#3434d2" stroke-width="0.4"><text transform="translate(570.2 336) rotate(-90)" textLength="16" lengthAdjust="spacingAndGlyphs">EG:6031.25</text><text transform="translate(572.6 336) rotate(-90)" textLength="14" lengthAdjust="spacingAndGlyphs">FG 6032.18</text></g><path d="M571 335v3" stroke="#3434d4" stroke-width="0.7"/><g font-size="4.2" font-weight="bold" fill="#3434d2" stroke="#3434d2" stroke-width="0.4"><text transform="translate(597.7 336) rotate(-90)" textLength="16" lengthAdjust="spacingAndGlyphs">EG:6031.25</text><text transform="translate(600.1 336) rotate(-90)" textLength="14" lengthAdjust="spacingAndGlyphs">FG 6032.18</text></g><path d="M598.5 335v3" stroke="#3434d4" stroke-width="0.7"/><g font-size="4.2" font-weight="bold" fill="#3434d2" stroke="#3434d2" stroke-width="0.4"><text transform="translate(627.7 336) rotate(-90)" textLength="17" lengthAdjust="spacingAndGlyphs">EG:6031.25</text><text transform="translate(630.1 336) rotate(-90)" textLength="15" lengthAdjust="spacingAndGlyphs">FG 6032.18</text></g><path d="M628.5 335v3" stroke="#3434d4" stroke-width="0.7"/><g font-size="4.2" font-weight="bold" fill="#3434d2" stroke="#3434d2" stroke-width="0.4"><text transform="translate(631.2 336) rotate(-90)" textLength="18" lengthAdjust="spacingAndGlyphs">EG:6031.25</text><text transform="translate(633.6 336) rotate(-90)" textLength="16" lengthAdjust="spacingAndGlyphs">FG 6032.18</text></g><path d="M632 335v3" stroke="#3434d4" stroke-width="0.7"/><g font-size="4.2" font-weight="bold" fill="#3434d2" stroke="#3434d2" stroke-width="0.4"><text transform="translate(634.7 336) rotate(-90)" textLength="17" lengthAdjust="spacingAndGlyphs">EG:6031.25</text><text transform="translate(637.1 336) rotate(-90)" textLength="15" lengthAdjust="spacingAndGlyphs">FG 6032.18</text></g><path d="M635.5 335v3" stroke="#3434d4" stroke-width="0.7"/><g font-size="4.2" font-weight="bold" fill="#3434d2" stroke="#3434d2" stroke-width="0.4"><text transform="translate(638.7 336) rotate(-90)" textLength="16" lengthAdjust="spacingAndGlyphs">EG:6031.25</text><text transform="translate(641.1 336) rotate(-90)" textLength="14" lengthAdjust="spacingAndGlyphs">FG 6032.18</text></g><path d="M639.5 335v3" stroke="#3434d4" stroke-width="0.7"/><g font-size="4.2" font-weight="bold" fill="#3434d2" stroke="#3434d2" stroke-width="0.4"><text transform="translate(645.2 336) rotate(-90)" textLength="17" lengthAdjust="spacingAndGlyphs">EG:6031.25</text><text transform="translate(647.6 336) rotate(-90)" textLength="15" lengthAdjust="spacingAndGlyphs">FG 6032.18</text></g><path d="M646 335v3" stroke="#3434d4" stroke-width="0.7"/><g font-size="4.2" font-weight="bold" fill="#3434d2" stroke="#3434d2" stroke-width="0.4"><text transform="translate(673.2 336) rotate(-90)" textLength="16" lengthAdjust="spacingAndGlyphs">EG:6031.25</text><text transform="translate(675.6 336) rotate(-90)" textLength="14" lengthAdjust="spacingAndGlyphs">FG 6032.18</text></g><path d="M674 335v3" stroke="#3434d4" stroke-width="0.7"/><g font-size="4.2" font-weight="bold" fill="#3434d2" stroke="#3434d2" stroke-width="0.4"><text transform="translate(701.2 336) rotate(-90)" textLength="16" lengthAdjust="spacingAndGlyphs">EG:6031.25</text><text transform="translate(703.6 336) rotate(-90)" textLength="14" lengthAdjust="spacingAndGlyphs">FG 6032.18</text></g><path d="M702 335v3" stroke="#3434d4" stroke-width="0.7"/><g font-size="4.2" font-weight="bold" fill="#3434d2" stroke="#3434d2" stroke-width="0.4"><text transform="translate(733.2 336) rotate(-90)" textLength="14" lengthAdjust="spacingAndGlyphs">EG:6031.25</text><text transform="translate(735.6 336) rotate(-90)" textLength="12" lengthAdjust="spacingAndGlyphs">FG 6032.18</text></g><path d="M734 335v3" stroke="#3434d4" stroke-width="0.7"/><g font-size="4.2" font-weight="bold" fill="#3434d2" stroke="#3434d2" stroke-width="0.4"><text transform="translate(739.2 336) rotate(-90)" textLength="16" lengthAdjust="spacingAndGlyphs">EG:6031.25</text><text transform="translate(741.6 336) rotate(-90)" textLength="14" lengthAdjust="spacingAndGlyphs">FG 6032.18</text></g><path d="M740 335v3" stroke="#3434d4" stroke-width="0.7"/><g font-size="4.2" font-weight="bold" fill="#3434d2" stroke="#3434d2" stroke-width="0.4"><text transform="translate(748.2 336) rotate(-90)" textLength="15" lengthAdjust="spacingAndGlyphs">EG:6031.25</text><text transform="translate(750.6 336) rotate(-90)" textLength="13" lengthAdjust="spacingAndGlyphs">FG 6032.18</text></g><path d="M749 335v3" stroke="#3434d4" stroke-width="0.7"/><g font-size="4.2" font-weight="bold" fill="#3434d2" stroke="#3434d2" stroke-width="0.4"><text transform="translate(771.0 334) rotate(-90)" textLength="16" lengthAdjust="spacingAndGlyphs">EG:6031.25</text><text transform="translate(773.4 334) rotate(-90)" textLength="14" lengthAdjust="spacingAndGlyphs">FG 6032.18</text></g><path d="M771.8 333v3" stroke="#3434d4" stroke-width="0.7"/><g font-size="4.2" font-weight="bold" fill="#3434d2" stroke="#3434d2" stroke-width="0.4"><text transform="translate(789.2 342) rotate(-90)" textLength="15" lengthAdjust="spacingAndGlyphs">EG:6031.25</text><text transform="translate(791.6 342) rotate(-90)" textLength="13" lengthAdjust="spacingAndGlyphs">FG 6032.18</text></g><path d="M790 341v3" stroke="#3434d4" stroke-width="0.7"/><g font-size="4.2" font-weight="bold" fill="#3434d2" stroke="#3434d2" stroke-width="0.4"><text transform="translate(841.0 319) rotate(-90)" textLength="15" lengthAdjust="spacingAndGlyphs">EG:6031.25</text><text transform="translate(843.4 319) rotate(-90)" textLength="13" lengthAdjust="spacingAndGlyphs">FG 6032.18</text></g><path d="M841.8 318v3" stroke="#3434d4" stroke-width="0.7"/><path d="M532 344.7L632 342.7" stroke="#c89060" stroke-width="0.6"/><text x="548.0" y="339.3" font-size="3.4" font-weight="bold" fill="#3434d2" textLength="8" lengthAdjust="spacingAndGlyphs">-2.00%</text><text x="578.0" y="338.7" font-size="3.4" font-weight="bold" fill="#3434d2" textLength="8" lengthAdjust="spacingAndGlyphs">-2.00%</text><text x="608.0" y="338.1" font-size="3.4" font-weight="bold" fill="#3434d2" textLength="8" lengthAdjust="spacingAndGlyphs">-2.00%</text><path d="M640 343.2L738 345.2" stroke="#c89060" stroke-width="0.6"/><text x="655.6" y="338.6" font-size="3.4" font-weight="bold" fill="#3434d2" textLength="8" lengthAdjust="spacingAndGlyphs">-2.00%</text><text x="685.0" y="339.2" font-size="3.4" font-weight="bold" fill="#3434d2" textLength="8" lengthAdjust="spacingAndGlyphs">-2.00%</text><text x="714.4" y="339.8" font-size="3.4" font-weight="bold" fill="#3434d2" textLength="8" lengthAdjust="spacingAndGlyphs">-2.00%</text><rect x="646.5" y="287.5" width="49" height="8.6" fill="#fff" stroke="#c04040" stroke-width="0.9"/><text x="671.0" y="295.5" font-size="10.2" fill="#c04848" text-anchor="middle" font-family="Liberation Sans" textLength="46" lengthAdjust="spacingAndGlyphs">760+00.00</text><text x="532.5" y="364.2" font-size="8.4" fill="#2a2a2e" font-family="Liberation Sans" letter-spacing="1.3" textLength="74" lengthAdjust="spacingAndGlyphs">WB  RIDGEGATE  PKWY</text><text x="648.5" y="364.2" font-size="8.4" fill="#2a2a2e" font-family="Liberation Sans" letter-spacing="1.3" textLength="74" lengthAdjust="spacingAndGlyphs">EB  RIDGEGATE  PKWY</text><rect x="367" y="304" width="30" height="28.5" rx="0.8" fill="#505050"/><rect x="368" y="304.90" width="28" height="2.7" fill="#fff"/><rect x="369" y="305.40" width="26" height="1.7" fill="#5ab06a"/><rect x="368" y="308.40" width="13.3" height="2.7" fill="#fff"/><rect x="382.5" y="308.40" width="13.5" height="2.7" fill="#fff"/><rect x="370.5" y="308.95" width="8" height="1.6" fill="#5ab06a"/><rect x="384.5" y="308.95" width="9" height="1.6" fill="#5ab06a"/><rect x="368" y="311.90" width="13.3" height="2.7" fill="#fff"/><rect x="382.5" y="311.90" width="13.5" height="2.7" fill="#fff"/><rect x="370.5" y="312.45" width="8" height="1.6" fill="#5ab06a"/><rect x="384.5" y="312.45" width="9" height="1.6" fill="#5ab06a"/><rect x="368" y="315.40" width="13.3" height="2.7" fill="#fff"/><rect x="382.5" y="315.40" width="13.5" height="2.7" fill="#fff"/><rect x="370.5" y="315.95" width="8" height="1.6" fill="#5ab06a"/><rect x="384.5" y="315.95" width="9" height="1.6" fill="#5ab06a"/><rect x="368" y="318.90" width="13.3" height="2.7" fill="#fff"/><rect x="382.5" y="318.90" width="13.5" height="2.7" fill="#fff"/><rect x="370.5" y="319.45" width="8" height="1.6" fill="#5ab06a"/><rect x="384.5" y="319.45" width="9" height="1.6" fill="#5ab06a"/><rect x="368" y="322.40" width="13.3" height="2.7" fill="#fff"/><rect x="382.5" y="322.40" width="13.5" height="2.7" fill="#fff"/><rect x="370.5" y="322.95" width="8" height="1.6" fill="#5ab06a"/><rect x="384.5" y="322.95" width="9" height="1.6" fill="#5ab06a"/><rect x="368" y="325.90" width="13.3" height="2.7" fill="#fff"/><rect x="382.5" y="325.90" width="13.5" height="2.7" fill="#fff"/><rect x="370.5" y="326.45" width="8" height="1.6" fill="#5ab06a"/><rect x="384.5" y="326.45" width="9" height="1.6" fill="#5ab06a"/><rect x="368" y="329.40" width="13.3" height="2.7" fill="#fff"/><rect x="382.5" y="329.40" width="13.5" height="2.7" fill="#fff"/><rect x="370.5" y="329.95" width="8" height="1.6" fill="#5ab06a"/><rect x="384.5" y="329.95" width="9" height="1.6" fill="#5ab06a"/><rect x="367" y="334" width="42.5" height="21.5" rx="0.8" fill="#505050"/><rect x="368" y="334.90" width="40.5" height="2.6" fill="#fff"/><rect x="377" y="335.40" width="22" height="1.6" fill="#5058c8"/><rect x="368" y="338.35" width="13.3" height="2.6" fill="#fff"/><rect x="369.4" y="338.85" width="10.5" height="1.6" fill="#5058c8"/><rect x="382.3" y="338.35" width="6.8" height="2.6" fill="#fff"/><rect x="383.7" y="338.85" width="4.0" height="1.6" fill="#5058c8"/><rect x="390" y="338.35" width="7.5" height="2.6" fill="#fff"/><rect x="391.4" y="338.85" width="4.7" height="1.6" fill="#5058c8"/><rect x="398.5" y="338.35" width="10" height="2.6" fill="#fff"/><rect x="399.9" y="338.85" width="7.2" height="1.6" fill="#5058c8"/><rect x="368" y="341.80" width="13.3" height="2.6" fill="#fff"/><rect x="369.4" y="342.30" width="10.5" height="1.6" fill="#5058c8"/><rect x="382.3" y="341.80" width="6.8" height="2.6" fill="#fff"/><rect x="383.7" y="342.30" width="4.0" height="1.6" fill="#5058c8"/><rect x="390" y="341.80" width="7.5" height="2.6" fill="#fff"/><rect x="391.4" y="342.30" width="4.7" height="1.6" fill="#5058c8"/><rect x="398.5" y="341.80" width="10" height="2.6" fill="#fff"/><rect x="399.9" y="342.30" width="7.2" height="1.6" fill="#5058c8"/><rect x="368" y="345.25" width="13.3" height="2.6" fill="#fff"/><rect x="369.4" y="345.75" width="10.5" height="1.6" fill="#5058c8"/><rect x="382.3" y="345.25" width="6.8" height="2.6" fill="#fff"/><rect x="383.7" y="345.75" width="4.0" height="1.6" fill="#5058c8"/><rect x="390" y="345.25" width="7.5" height="2.6" fill="#fff"/><rect x="391.4" y="345.75" width="4.7" height="1.6" fill="#5058c8"/><rect x="398.5" y="345.25" width="10" height="2.6" fill="#fff"/><rect x="399.9" y="345.75" width="7.2" height="1.6" fill="#5058c8"/><rect x="368" y="348.70" width="13.3" height="2.6" fill="#fff"/><rect x="369.4" y="349.20" width="10.5" height="1.6" fill="#5058c8"/><rect x="382.3" y="348.70" width="6.8" height="2.6" fill="#fff"/><rect x="383.7" y="349.20" width="4.0" height="1.6" fill="#5058c8"/><rect x="390" y="348.70" width="7.5" height="2.6" fill="#fff"/><rect x="391.4" y="349.20" width="4.7" height="1.6" fill="#5058c8"/><rect x="398.5" y="348.70" width="10" height="2.6" fill="#fff"/><rect x="399.9" y="349.20" width="7.2" height="1.6" fill="#5058c8"/><rect x="368" y="352.15" width="13.3" height="2.6" fill="#fff"/><rect x="369.4" y="352.65" width="10.5" height="1.6" fill="#5058c8"/><rect x="382.3" y="352.15" width="6.8" height="2.6" fill="#fff"/><rect x="383.7" y="352.65" width="4.0" height="1.6" fill="#5058c8"/><rect x="390" y="352.15" width="7.5" height="2.6" fill="#fff"/><rect x="391.4" y="352.65" width="4.7" height="1.6" fill="#5058c8"/><rect x="398.5" y="352.15" width="10" height="2.6" fill="#fff"/><rect x="399.9" y="352.65" width="7.2" height="1.6" fill="#5058c8"/><path d="M426.3 405V451.3M431.0 405V451.3M435.6 405V451.3M440.3 405V451.3M449.5 405V451.3M454.2 405V451.3M458.8 405V451.3M463.5 405V451.3M472.7 405V451.3M477.4 405V451.3M482.0 405V451.3M486.7 405V451.3M495.9 405V451.3M500.6 405V451.3M505.2 405V451.3M509.9 405V451.3M519.1 405V451.3M523.8 405V451.3M528.4 405V451.3M533.1 405V451.3M542.3 405V451.3M547.0 405V451.3M551.6 405V451.3M556.3 405V451.3M565.5 405V451.3M570.2 405V451.3M574.8 405V451.3M579.5 405V451.3M588.7 405V451.3M593.4 405V451.3M598.0 405V451.3M602.7 405V451.3M611.9 405V451.3M616.6 405V451.3M621.2 405V451.3M625.9 405V451.3M635.1 405V451.3M639.8 405V451.3M644.4 405V451.3M649.1 405V451.3M658.3 405V451.3M663.0 405V451.3M667.6 405V451.3M672.3 405V451.3M681.5 405V451.3M686.2 405V451.3M690.8 405V451.3M695.5 405V451.3M704.7 405V451.3M709.4 405V451.3M714.0 405V451.3M718.7 405V451.3M727.9 405V451.3M732.6 405V451.3M737.2 405V451.3M741.9 405V451.3M751.1 405V451.3M755.8 405V451.3M760.4 405V451.3M765.1 405V451.3M774.3 405V451.3M779.0 405V451.3M783.6 405V451.3M788.3 405V451.3M797.5 405V451.3M802.2 405V451.3M806.8 405V451.3M811.5 405V451.3M820.7 405V451.3M825.4 405V451.3M830.0 405V451.3M834.7 405V451.3M843.9 405V451.3M848.6 405V451.3M853.2 405V451.3M857.9 405V451.3M867.1 405V451.3M871.8 405V451.3M876.4 405V451.3M881.1 405V451.3M420 409.6H884.7M420 414.3H884.7M420 418.9H884.7M420 423.5H884.7M420 432.8H884.7M420 437.4H884.7M420 442.0H884.7M420 446.7H884.7" stroke="#bcbcc4" stroke-width="0.55"/><path d="M421.7 405V451.3M444.9 405V451.3M468.1 405V451.3M491.3 405V451.3M514.5 405V451.3M537.7 405V451.3M560.9 405V451.3M584.1 405V451.3M607.3 405V451.3M630.5 405V451.3M653.7 405V451.3M676.9 405V451.3M700.1 405V451.3M723.3 405V451.3M746.5 405V451.3M769.7 405V451.3M792.9 405V451.3M816.1 405V451.3M839.3 405V451.3M862.5 405V451.3M420 428.1H884.7" stroke="#96969f" stroke-width="0.7"/><rect x="420" y="405" width="464.70000000000005" height="46.30000000000001" fill="none" stroke="#4a4ad0" stroke-width="1.1"/><text x="409" y="406.8" font-size="4.4" fill="#c02828" font-weight="bold" font-family="Liberation Sans">6030</text><text x="886.7" y="406.8" font-size="4.4" fill="#c02828" font-weight="bold" font-family="Liberation Sans">6030</text><text x="409" y="429.9" font-size="4.4" fill="#c02828" font-weight="bold" font-family="Liberation Sans">6020</text><text x="886.7" y="429.9" font-size="4.4" fill="#c02828" font-weight="bold" font-family="Liberation Sans">6020</text><text x="409" y="453.1" font-size="4.4" fill="#c02828" font-weight="bold" font-family="Liberation Sans">6010</text><text x="886.7" y="453.1" font-size="4.4" fill="#c02828" font-weight="bold" font-family="Liberation Sans">6010</text><text x="421.7" y="461.3" font-size="4.8" fill="#c82828" text-anchor="middle" font-weight="bold" letter-spacing="-0.2" font-family="Liberation Sans">-110</text><text x="444.9" y="461.3" font-size="4.8" fill="#c82828" text-anchor="middle" font-weight="bold" letter-spacing="-0.2" font-family="Liberation Sans">-100</text><text x="468.1" y="461.3" font-size="4.8" fill="#c82828" text-anchor="middle" font-weight="bold" letter-spacing="-0.2" font-family="Liberation Sans">-90</text><text x="491.3" y="461.3" font-size="4.8" fill="#c82828" text-anchor="middle" font-weight="bold" letter-spacing="-0.2" font-family="Liberation Sans">-80</text><text x="514.5" y="461.3" font-size="4.8" fill="#c82828" text-anchor="middle" font-weight="bold" letter-spacing="-0.2" font-family="Liberation Sans">-70</text><text x="537.7" y="461.3" font-size="4.8" fill="#c82828" text-anchor="middle" font-weight="bold" letter-spacing="-0.2" font-family="Liberation Sans">-60</text><text x="560.9" y="461.3" font-size="4.8" fill="#c82828" text-anchor="middle" font-weight="bold" letter-spacing="-0.2" font-family="Liberation Sans">-50</text><text x="584.1" y="461.3" font-size="4.8" fill="#c82828" text-anchor="middle" font-weight="bold" letter-spacing="-0.2" font-family="Liberation Sans">-40</text><text x="607.3" y="461.3" font-size="4.8" fill="#c82828" text-anchor="middle" font-weight="bold" letter-spacing="-0.2" font-family="Liberation Sans">-30</text><text x="630.5" y="461.3" font-size="4.8" fill="#c82828" text-anchor="middle" font-weight="bold" letter-spacing="-0.2" font-family="Liberation Sans">-20</text><text x="653.7" y="461.3" font-size="4.8" fill="#c82828" text-anchor="middle" font-weight="bold" letter-spacing="-0.2" font-family="Liberation Sans">-10</text><text x="676.9" y="461.3" font-size="4.8" fill="#c82828" text-anchor="middle" font-weight="bold" letter-spacing="-0.2" font-family="Liberation Sans">0</text><text x="700.1" y="461.3" font-size="4.8" fill="#c82828" text-anchor="middle" font-weight="bold" letter-spacing="-0.2" font-family="Liberation Sans">10</text><text x="723.3" y="461.3" font-size="4.8" fill="#c82828" text-anchor="middle" font-weight="bold" letter-spacing="-0.2" font-family="Liberation Sans">20</text><text x="746.5" y="461.3" font-size="4.8" fill="#c82828" text-anchor="middle" font-weight="bold" letter-spacing="-0.2" font-family="Liberation Sans">30</text><text x="769.7" y="461.3" font-size="4.8" fill="#c82828" text-anchor="middle" font-weight="bold" letter-spacing="-0.2" font-family="Liberation Sans">40</text><text x="792.9" y="461.3" font-size="4.8" fill="#c82828" text-anchor="middle" font-weight="bold" letter-spacing="-0.2" font-family="Liberation Sans">50</text><text x="816.1" y="461.3" font-size="4.8" fill="#c82828" text-anchor="middle" font-weight="bold" letter-spacing="-0.2" font-family="Liberation Sans">60</text><text x="839.3" y="461.3" font-size="4.8" fill="#c82828" text-anchor="middle" font-weight="bold" letter-spacing="-0.2" font-family="Liberation Sans">70</text><text x="862.5" y="461.3" font-size="4.8" fill="#c82828" text-anchor="middle" font-weight="bold" letter-spacing="-0.2" font-family="Liberation Sans">80</text><polygon points="421,421 460,427 455,429 421,424" fill="#60d860"/><polygon points="466,427.5 501,429 481,435" fill="#e46868"/><polygon points="466,427.5 501,429 481,435" fill="url(#hatch)"/><polygon points="541,433 640,430 640,432.5 541,435.5" fill="#f1eb9c"/><polygon points="641,431.5 741,427.5 741,430 641,434" fill="#f1eb9c"/><polygon points="741,426 780,426 778,431 741,431" fill="#50e050"/><polygon points="782,426.5 880,412.5 880,414.5 800,432 792,431" fill="#e46868"/><polygon points="782,426.5 880,412.5 880,414.5 800,432 792,431" fill="url(#hatch)"/><polyline points="421,422 466,428 481,435 501,429" fill="none" stroke="#5a7ad8" stroke-width="1"/><polyline points="501,430 525,430" fill="none" stroke="#e08080" stroke-width="1.4"/><polyline points="525,431 541,432" fill="none" stroke="#40c040" stroke-width="1"/><polyline points="541,432.5 640,429.5" fill="none" stroke="#111" stroke-width="1.2"/><polyline points="640,429.5 641,431" fill="none" stroke="#40c0a0" stroke-width="1"/><polyline points="641,431 741,427" fill="none" stroke="#111" stroke-width="1.2"/><polyline points="741,426 778,425" fill="none" stroke="#e08080" stroke-width="1.2"/><polyline points="780,427 792,430 795,430 880,414" fill="none" stroke="#5a7ad8" stroke-width="1"/><polyline points="795,428 880,413" fill="none" stroke="#e08080" stroke-width="0.9"/><polyline points="880,414 884,414" fill="none" stroke="#40b040" stroke-width="1" stroke-dasharray="3 1.5"/><g font-size="4.2" font-weight="bold" fill="#3434d2" stroke="#3434d2" stroke-width="0.4"><text transform="translate(427.7 419) rotate(-90)" textLength="16" lengthAdjust="spacingAndGlyphs">EG:6031.25</text><text transform="translate(430.1 419) rotate(-90)" textLength="14" lengthAdjust="spacingAndGlyphs">FG 6032.18</text></g><path d="M428.5 418v3" stroke="#3434d4" stroke-width="0.7"/><g font-size="4.2" font-weight="bold" fill="#3434d2" stroke="#3434d2" stroke-width="0.4"><text transform="translate(483.5 432) rotate(-90)" textLength="15" lengthAdjust="spacingAndGlyphs">EG:6031.25</text><text transform="translate(485.90000000000003 432) rotate(-90)" textLength="13" lengthAdjust="spacingAndGlyphs">FG 6032.18</text></g><path d="M484.3 431v3" stroke="#3434d4" stroke-width="0.7"/><g font-size="4.2" font-weight="bold" fill="#3434d2" stroke="#3434d2" stroke-width="0.4"><text transform="translate(501.9 427) rotate(-90)" textLength="17" lengthAdjust="spacingAndGlyphs">EG:6031.25</text><text transform="translate(504.3 427) rotate(-90)" textLength="15" lengthAdjust="spacingAndGlyphs">FG 6032.18</text></g><path d="M502.7 426v3" stroke="#3434d4" stroke-width="0.7"/><g font-size="4.2" font-weight="bold" fill="#3434d2" stroke="#3434d2" stroke-width="0.4"><text transform="translate(525.2 427) rotate(-90)" textLength="15" lengthAdjust="spacingAndGlyphs">EG:6031.25</text><text transform="translate(527.6 427) rotate(-90)" textLength="13" lengthAdjust="spacingAndGlyphs">FG 6032.18</text></g><path d="M526 426v3" stroke="#3434d4" stroke-width="0.7"/><g font-size="4.2" font-weight="bold" fill="#3434d2" stroke="#3434d2" stroke-width="0.4"><text transform="translate(535.2 427) rotate(-90)" textLength="15" lengthAdjust="spacingAndGlyphs">EG:6031.25</text><text transform="translate(537.6 427) rotate(-90)" textLength="13" lengthAdjust="spacingAndGlyphs">FG 6032.18</text></g><path d="M536 426v3" stroke="#3434d4" stroke-width="0.7"/><g font-size="4.2" font-weight="bold" fill="#3434d2" stroke="#3434d2" stroke-width="0.4"><text transform="translate(541.0 429) rotate(-90)" textLength="15" lengthAdjust="spacingAndGlyphs">EG:6031.25</text><text transform="translate(543.4 429) rotate(-90)" textLength="13" lengthAdjust="spacingAndGlyphs">FG 6032.18</text></g><path d="M541.8 428v3" stroke="#3434d4" stroke-width="0.7"/><g font-size="4.2" font-weight="bold" fill="#3434d2" stroke="#3434d2" stroke-width="0.4"><text transform="translate(572.7 428) rotate(-90)" textLength="17" lengthAdjust="spacingAndGlyphs">EG:6031.25</text><text transform="translate(575.1 428) rotate(-90)" textLength="15" lengthAdjust="spacingAndGlyphs">FG 6032.18</text></g><path d="M573.5 427v3" stroke="#3434d4" stroke-width="0.7"/><g font-size="4.2" font-weight="bold" fill="#3434d2" stroke="#3434d2" stroke-width="0.4"><text transform="translate(601.2 427) rotate(-90)" textLength="17" lengthAdjust="spacingAndGlyphs">EG:6031.25</text><text transform="translate(603.6 427) rotate(-90)" textLength="15" lengthAdjust="spacingAndGlyphs">FG 6032.18</text></g><path d="M602 426v3" stroke="#3434d4" stroke-width="0.7"/><g font-size="4.2" font-weight="bold" fill="#3434d2" stroke="#3434d2" stroke-width="0.4"><text transform="translate(629.2 427) rotate(-90)" textLength="18" lengthAdjust="spacingAndGlyphs">EG:6031.25</text><text transform="translate(631.6 427) rotate(-90)" textLength="16" lengthAdjust="spacingAndGlyphs">FG 6032.18</text></g><path d="M630 426v3" stroke="#3434d4" stroke-width="0.7"/><g font-size="4.2" font-weight="bold" fill="#3434d2" stroke="#3434d2" stroke-width="0.4"><text transform="translate(635.2 427) rotate(-90)" textLength="17" lengthAdjust="spacingAndGlyphs">EG:6031.25</text><text transform="translate(637.6 427) rotate(-90)" textLength="15" lengthAdjust="spacingAndGlyphs">FG 6032.18</text></g><path d="M636 426v3" stroke="#3434d4" stroke-width="0.7"/><g font-size="4.2" font-weight="bold" fill="#3434d2" stroke="#3434d2" stroke-width="0.4"><text transform="translate(641.2 428) rotate(-90)" textLength="17" lengthAdjust="spacingAndGlyphs">EG:6031.25</text><text transform="translate(643.6 428) rotate(-90)" textLength="15" lengthAdjust="spacingAndGlyphs">FG 6032.18</text></g><path d="M642 427v3" stroke="#3434d4" stroke-width="0.7"/><g font-size="4.2" font-weight="bold" fill="#3434d2" stroke="#3434d2" stroke-width="0.4"><text transform="translate(648.2 428) rotate(-90)" textLength="16" lengthAdjust="spacingAndGlyphs">EG:6031.25</text><text transform="translate(650.6 428) rotate(-90)" textLength="14" lengthAdjust="spacingAndGlyphs">FG 6032.18</text></g><path d="M649 427v3" stroke="#3434d4" stroke-width="0.7"/><g font-size="4.2" font-weight="bold" fill="#3434d2" stroke="#3434d2" stroke-width="0.4"><text transform="translate(676.2 427) rotate(-90)" textLength="16" lengthAdjust="spacingAndGlyphs">EG:6031.25</text><text transform="translate(678.6 427) rotate(-90)" textLength="14" lengthAdjust="spacingAndGlyphs">FG 6032.18</text></g><path d="M677 426v3" stroke="#3434d4" stroke-width="0.7"/><g font-size="4.2" font-weight="bold" fill="#3434d2" stroke="#3434d2" stroke-width="0.4"><text transform="translate(704.2 427) rotate(-90)" textLength="17" lengthAdjust="spacingAndGlyphs">EG:6031.25</text><text transform="translate(706.6 427) rotate(-90)" textLength="15" lengthAdjust="spacingAndGlyphs">FG 6032.18</text></g><path d="M705 426v3" stroke="#3434d4" stroke-width="0.7"/><g font-size="4.2" font-weight="bold" fill="#3434d2" stroke="#3434d2" stroke-width="0.4"><text transform="translate(735.2 427) rotate(-90)" textLength="16" lengthAdjust="spacingAndGlyphs">EG:6031.25</text><text transform="translate(737.6 427) rotate(-90)" textLength="14" lengthAdjust="spacingAndGlyphs">FG 6032.18</text></g><path d="M736 426v3" stroke="#3434d4" stroke-width="0.7"/><g font-size="4.2" font-weight="bold" fill="#3434d2" stroke="#3434d2" stroke-width="0.4"><text transform="translate(742.2 426) rotate(-90)" textLength="16" lengthAdjust="spacingAndGlyphs">EG:6031.25</text><text transform="translate(744.6 426) rotate(-90)" textLength="14" lengthAdjust="spacingAndGlyphs">FG 6032.18</text></g><path d="M743 425v3" stroke="#3434d4" stroke-width="0.7"/><g font-size="4.2" font-weight="bold" fill="#3434d2" stroke="#3434d2" stroke-width="0.4"><text transform="translate(752.2 424) rotate(-90)" textLength="16" lengthAdjust="spacingAndGlyphs">EG:6031.25</text><text transform="translate(754.6 424) rotate(-90)" textLength="14" lengthAdjust="spacingAndGlyphs">FG 6032.18</text></g><path d="M753 423v3" stroke="#3434d4" stroke-width="0.7"/><g font-size="4.2" font-weight="bold" fill="#3434d2" stroke="#3434d2" stroke-width="0.4"><text transform="translate(775.2 424) rotate(-90)" textLength="16" lengthAdjust="spacingAndGlyphs">EG:6031.25</text><text transform="translate(777.6 424) rotate(-90)" textLength="14" lengthAdjust="spacingAndGlyphs">FG 6032.18</text></g><path d="M776 423v3" stroke="#3434d4" stroke-width="0.7"/><g font-size="4.2" font-weight="bold" fill="#3434d2" stroke="#3434d2" stroke-width="0.4"><text transform="translate(793.5 431) rotate(-90)" textLength="18" lengthAdjust="spacingAndGlyphs">EG:6031.25</text><text transform="translate(795.9 431) rotate(-90)" textLength="16" lengthAdjust="spacingAndGlyphs">FG 6032.18</text></g><path d="M794.3 430v3" stroke="#3434d4" stroke-width="0.7"/><g font-size="4.2" font-weight="bold" fill="#3434d2" stroke="#3434d2" stroke-width="0.4"><text transform="translate(880.2 411) rotate(-90)" textLength="14" lengthAdjust="spacingAndGlyphs">EG:6031.25</text><text transform="translate(882.6 411) rotate(-90)" textLength="12" lengthAdjust="spacingAndGlyphs">FG 6032.18</text></g><path d="M881 410v3" stroke="#3434d4" stroke-width="0.7"/><path d="M541 436.7L640 433.7" stroke="#c89060" stroke-width="0.6"/><text x="556.8" y="431.1" font-size="3.4" font-weight="bold" fill="#3434d2" textLength="8" lengthAdjust="spacingAndGlyphs">-2.00%</text><text x="586.5" y="430.2" font-size="3.4" font-weight="bold" fill="#3434d2" textLength="8" lengthAdjust="spacingAndGlyphs">-2.00%</text><text x="616.2" y="429.3" font-size="3.4" font-weight="bold" fill="#3434d2" textLength="8" lengthAdjust="spacingAndGlyphs">-2.00%</text><path d="M641 435.2L741 431.2" stroke="#c89060" stroke-width="0.6"/><text x="657.0" y="429.4" font-size="3.4" font-weight="bold" fill="#3434d2" textLength="8" lengthAdjust="spacingAndGlyphs">-2.00%</text><text x="687.0" y="428.2" font-size="3.4" font-weight="bold" fill="#3434d2" textLength="8" lengthAdjust="spacingAndGlyphs">-2.00%</text><text x="717.0" y="427.0" font-size="3.4" font-weight="bold" fill="#3434d2" textLength="8" lengthAdjust="spacingAndGlyphs">-2.00%</text><rect x="651" y="392.5" width="49" height="8.6" fill="#fff" stroke="#c04040" stroke-width="0.9"/><text x="675.5" y="400.5" font-size="10.2" fill="#c04848" text-anchor="middle" font-family="Liberation Sans" textLength="46" lengthAdjust="spacingAndGlyphs">759+00.00</text><text x="538.5" y="469.3" font-size="8.4" fill="#2a2a2e" font-family="Liberation Sans" letter-spacing="1.3" textLength="74" lengthAdjust="spacingAndGlyphs">WB  RIDGEGATE  PKWY</text><text x="651" y="469.3" font-size="8.4" fill="#2a2a2e" font-family="Liberation Sans" letter-spacing="1.3" textLength="74" lengthAdjust="spacingAndGlyphs">EB  RIDGEGATE  PKWY</text><rect x="367" y="409" width="30" height="28.5" rx="0.8" fill="#505050"/><rect x="368" y="409.90" width="28" height="2.7" fill="#fff"/><rect x="369" y="410.40" width="26" height="1.7" fill="#5ab06a"/><rect x="368" y="413.40" width="13.3" height="2.7" fill="#fff"/><rect x="382.5" y="413.40" width="13.5" height="2.7" fill="#fff"/><rect x="370.5" y="413.95" width="8" height="1.6" fill="#5ab06a"/><rect x="384.5" y="413.95" width="9" height="1.6" fill="#5ab06a"/><rect x="368" y="416.90" width="13.3" height="2.7" fill="#fff"/><rect x="382.5" y="416.90" width="13.5" height="2.7" fill="#fff"/><rect x="370.5" y="417.45" width="8" height="1.6" fill="#5ab06a"/><rect x="384.5" y="417.45" width="9" height="1.6" fill="#5ab06a"/><rect x="368" y="420.40" width="13.3" height="2.7" fill="#fff"/><rect x="382.5" y="420.40" width="13.5" height="2.7" fill="#fff"/><rect x="370.5" y="420.95" width="8" height="1.6" fill="#5ab06a"/><rect x="384.5" y="420.95" width="9" height="1.6" fill="#5ab06a"/><rect x="368" y="423.90" width="13.3" height="2.7" fill="#fff"/><rect x="382.5" y="423.90" width="13.5" height="2.7" fill="#fff"/><rect x="370.5" y="424.45" width="8" height="1.6" fill="#5ab06a"/><rect x="384.5" y="424.45" width="9" height="1.6" fill="#5ab06a"/><rect x="368" y="427.40" width="13.3" height="2.7" fill="#fff"/><rect x="382.5" y="427.40" width="13.5" height="2.7" fill="#fff"/><rect x="370.5" y="427.95" width="8" height="1.6" fill="#5ab06a"/><rect x="384.5" y="427.95" width="9" height="1.6" fill="#5ab06a"/><rect x="368" y="430.90" width="13.3" height="2.7" fill="#fff"/><rect x="382.5" y="430.90" width="13.5" height="2.7" fill="#fff"/><rect x="370.5" y="431.45" width="8" height="1.6" fill="#5ab06a"/><rect x="384.5" y="431.45" width="9" height="1.6" fill="#5ab06a"/><rect x="368" y="434.40" width="13.3" height="2.7" fill="#fff"/><rect x="382.5" y="434.40" width="13.5" height="2.7" fill="#fff"/><rect x="370.5" y="434.95" width="8" height="1.6" fill="#5ab06a"/><rect x="384.5" y="434.95" width="9" height="1.6" fill="#5ab06a"/><rect x="367" y="439" width="42.5" height="21.5" rx="0.8" fill="#505050"/><rect x="368" y="439.90" width="40.5" height="2.6" fill="#fff"/><rect x="377" y="440.40" width="22" height="1.6" fill="#5058c8"/><rect x="368" y="443.35" width="13.3" height="2.6" fill="#fff"/><rect x="369.4" y="443.85" width="10.5" height="1.6" fill="#5058c8"/><rect x="382.3" y="443.35" width="6.8" height="2.6" fill="#fff"/><rect x="383.7" y="443.85" width="4.0" height="1.6" fill="#5058c8"/><rect x="390" y="443.35" width="7.5" height="2.6" fill="#fff"/><rect x="391.4" y="443.85" width="4.7" height="1.6" fill="#5058c8"/><rect x="398.5" y="443.35" width="10" height="2.6" fill="#fff"/><rect x="399.9" y="443.85" width="7.2" height="1.6" fill="#5058c8"/><rect x="368" y="446.80" width="13.3" height="2.6" fill="#fff"/><rect x="369.4" y="447.30" width="10.5" height="1.6" fill="#5058c8"/><rect x="382.3" y="446.80" width="6.8" height="2.6" fill="#fff"/><rect x="383.7" y="447.30" width="4.0" height="1.6" fill="#5058c8"/><rect x="390" y="446.80" width="7.5" height="2.6" fill="#fff"/><rect x="391.4" y="447.30" width="4.7" height="1.6" fill="#5058c8"/><rect x="398.5" y="446.80" width="10" height="2.6" fill="#fff"/><rect x="399.9" y="447.30" width="7.2" height="1.6" fill="#5058c8"/><rect x="368" y="450.25" width="13.3" height="2.6" fill="#fff"/><rect x="369.4" y="450.75" width="10.5" height="1.6" fill="#5058c8"/><rect x="382.3" y="450.25" width="6.8" height="2.6" fill="#fff"/><rect x="383.7" y="450.75" width="4.0" height="1.6" fill="#5058c8"/><rect x="390" y="450.25" width="7.5" height="2.6" fill="#fff"/><rect x="391.4" y="450.75" width="4.7" height="1.6" fill="#5058c8"/><rect x="398.5" y="450.25" width="10" height="2.6" fill="#fff"/><rect x="399.9" y="450.75" width="7.2" height="1.6" fill="#5058c8"/><rect x="368" y="453.70" width="13.3" height="2.6" fill="#fff"/><rect x="369.4" y="454.20" width="10.5" height="1.6" fill="#5058c8"/><rect x="382.3" y="453.70" width="6.8" height="2.6" fill="#fff"/><rect x="383.7" y="454.20" width="4.0" height="1.6" fill="#5058c8"/><rect x="390" y="453.70" width="7.5" height="2.6" fill="#fff"/><rect x="391.4" y="454.20" width="4.7" height="1.6" fill="#5058c8"/><rect x="398.5" y="453.70" width="10" height="2.6" fill="#fff"/><rect x="399.9" y="454.20" width="7.2" height="1.6" fill="#5058c8"/><rect x="368" y="457.15" width="13.3" height="2.6" fill="#fff"/><rect x="369.4" y="457.65" width="10.5" height="1.6" fill="#5058c8"/><rect x="382.3" y="457.15" width="6.8" height="2.6" fill="#fff"/><rect x="383.7" y="457.65" width="4.0" height="1.6" fill="#5058c8"/><rect x="390" y="457.15" width="7.5" height="2.6" fill="#fff"/><rect x="391.4" y="457.65" width="4.7" height="1.6" fill="#5058c8"/><rect x="398.5" y="457.15" width="10" height="2.6" fill="#fff"/><rect x="399.9" y="457.65" width="7.2" height="1.6" fill="#5058c8"/><path d="M421.9 510.3V557M426.5 510.3V557M431.2 510.3V557M440.4 510.3V557M445.1 510.3V557M449.7 510.3V557M454.4 510.3V557M463.6 510.3V557M468.3 510.3V557M472.9 510.3V557M477.6 510.3V557M486.8 510.3V557M491.5 510.3V557M496.1 510.3V557M500.8 510.3V557M510.0 510.3V557M514.7 510.3V557M519.3 510.3V557M524.0 510.3V557M533.2 510.3V557M537.9 510.3V557M542.5 510.3V557M547.2 510.3V557M556.4 510.3V557M561.1 510.3V557M565.7 510.3V557M570.4 510.3V557M579.6 510.3V557M584.3 510.3V557M588.9 510.3V557M593.6 510.3V557M602.8 510.3V557M607.5 510.3V557M612.1 510.3V557M616.8 510.3V557M626.0 510.3V557M630.7 510.3V557M635.3 510.3V557M640.0 510.3V557M649.2 510.3V557M653.9 510.3V557M658.5 510.3V557M663.2 510.3V557M672.4 510.3V557M677.1 510.3V557M681.7 510.3V557M686.4 510.3V557M695.6 510.3V557M700.3 510.3V557M704.9 510.3V557M709.6 510.3V557M718.8 510.3V557M723.5 510.3V557M728.1 510.3V557M732.8 510.3V557M742.0 510.3V557M746.7 510.3V557M751.3 510.3V557M756.0 510.3V557M765.2 510.3V557M769.9 510.3V557M774.5 510.3V557M779.2 510.3V557M788.4 510.3V557M793.1 510.3V557M797.7 510.3V557M802.4 510.3V557M811.6 510.3V557M816.3 510.3V557M820.9 510.3V557M825.6 510.3V557M834.8 510.3V557M839.5 510.3V557M844.1 510.3V557M848.8 510.3V557M858.0 510.3V557M862.7 510.3V557M420.5 515.0H864M420.5 519.6H864M420.5 524.3H864M420.5 529.0H864M420.5 538.3H864M420.5 543.0H864M420.5 547.7H864M420.5 552.3H864" stroke="#bcbcc4" stroke-width="0.55"/><path d="M435.8 510.3V557M459.0 510.3V557M482.2 510.3V557M505.4 510.3V557M528.6 510.3V557M551.8 510.3V557M575.0 510.3V557M598.2 510.3V557M621.4 510.3V557M644.6 510.3V557M667.8 510.3V557M691.0 510.3V557M714.2 510.3V557M737.4 510.3V557M760.6 510.3V557M783.8 510.3V557M807.0 510.3V557M830.2 510.3V557M853.4 510.3V557M420.5 533.6H864" stroke="#96969f" stroke-width="0.7"/><rect x="420.5" y="510.3" width="443.5" height="46.69999999999999" fill="none" stroke="#4a4ad0" stroke-width="1.1"/><text x="409.5" y="512.1" font-size="4.4" fill="#c02828" font-weight="bold" font-family="Liberation Sans">6020</text><text x="866" y="512.1" font-size="4.4" fill="#c02828" font-weight="bold" font-family="Liberation Sans">6020</text><text x="409.5" y="535.4" font-size="4.4" fill="#c02828" font-weight="bold" font-family="Liberation Sans">6010</text><text x="866" y="535.4" font-size="4.4" fill="#c02828" font-weight="bold" font-family="Liberation Sans">6010</text><text x="409.5" y="558.8" font-size="4.4" fill="#c02828" font-weight="bold" font-family="Liberation Sans">6000</text><text x="866" y="558.8" font-size="4.4" fill="#c02828" font-weight="bold" font-family="Liberation Sans">6000</text><text x="435.8" y="567" font-size="4.8" fill="#c82828" text-anchor="middle" font-weight="bold" letter-spacing="-0.2" font-family="Liberation Sans">-110</text><text x="459.0" y="567" font-size="4.8" fill="#c82828" text-anchor="middle" font-weight="bold" letter-spacing="-0.2" font-family="Liberation Sans">-100</text><text x="482.2" y="567" font-size="4.8" fill="#c82828" text-anchor="middle" font-weight="bold" letter-spacing="-0.2" font-family="Liberation Sans">-90</text><text x="505.4" y="567" font-size="4.8" fill="#c82828" text-anchor="middle" font-weight="bold" letter-spacing="-0.2" font-family="Liberation Sans">-80</text><text x="528.6" y="567" font-size="4.8" fill="#c82828" text-anchor="middle" font-weight="bold" letter-spacing="-0.2" font-family="Liberation Sans">-70</text><text x="551.8" y="567" font-size="4.8" fill="#c82828" text-anchor="middle" font-weight="bold" letter-spacing="-0.2" font-family="Liberation Sans">-60</text><text x="575.0" y="567" font-size="4.8" fill="#c82828" text-anchor="middle" font-weight="bold" letter-spacing="-0.2" font-family="Liberation Sans">-50</text><text x="598.2" y="567" font-size="4.8" fill="#c82828" text-anchor="middle" font-weight="bold" letter-spacing="-0.2" font-family="Liberation Sans">-40</text><text x="621.4" y="567" font-size="4.8" fill="#c82828" text-anchor="middle" font-weight="bold" letter-spacing="-0.2" font-family="Liberation Sans">-30</text><text x="644.6" y="567" font-size="4.8" fill="#c82828" text-anchor="middle" font-weight="bold" letter-spacing="-0.2" font-family="Liberation Sans">-20</text><text x="667.8" y="567" font-size="4.8" fill="#c82828" text-anchor="middle" font-weight="bold" letter-spacing="-0.2" font-family="Liberation Sans">-10</text><text x="691.0" y="567" font-size="4.8" fill="#c82828" text-anchor="middle" font-weight="bold" letter-spacing="-0.2" font-family="Liberation Sans">0</text><text x="714.2" y="567" font-size="4.8" fill="#c82828" text-anchor="middle" font-weight="bold" letter-spacing="-0.2" font-family="Liberation Sans">10</text><text x="737.4" y="567" font-size="4.8" fill="#c82828" text-anchor="middle" font-weight="bold" letter-spacing="-0.2" font-family="Liberation Sans">20</text><text x="760.6" y="567" font-size="4.8" fill="#c82828" text-anchor="middle" font-weight="bold" letter-spacing="-0.2" font-family="Liberation Sans">30</text><text x="783.8" y="567" font-size="4.8" fill="#c82828" text-anchor="middle" font-weight="bold" letter-spacing="-0.2" font-family="Liberation Sans">40</text><text x="807.0" y="567" font-size="4.8" fill="#c82828" text-anchor="middle" font-weight="bold" letter-spacing="-0.2" font-family="Liberation Sans">50</text><text x="830.2" y="567" font-size="4.8" fill="#c82828" text-anchor="middle" font-weight="bold" letter-spacing="-0.2" font-family="Liberation Sans">60</text><text x="853.4" y="567" font-size="4.8" fill="#c82828" text-anchor="middle" font-weight="bold" letter-spacing="-0.2" font-family="Liberation Sans">70</text><polygon points="425,511 500,520 505,521 493,525" fill="#e46868"/><polygon points="425,511 500,520 505,521 493,525" fill="url(#hatch)"/><polygon points="505,521 640,521 625,526 610,529 550,529 525,527" fill="#50e050"/><polygon points="757,516 793,516 862,533 862,534 823,534 810,528 795,522 757,521" fill="#50e050"/><polygon points="549,523.5 640,520.5 640,523 549,526" fill="#f1eb9c"/><polygon points="656,520.5 752,517.5 752,520 656,523" fill="#f1eb9c"/><polyline points="421,511 493,525 505,521" fill="none" stroke="#5a7ad8" stroke-width="1"/><polyline points="505,521 537,521" fill="none" stroke="#e08080" stroke-width="1.2"/><polyline points="549,523 640,520" fill="none" stroke="#111" stroke-width="1.2"/><polyline points="640,520 648,518 656,520" fill="none" stroke="#40c060" stroke-width="1"/><polyline points="656,520 752,517" fill="none" stroke="#111" stroke-width="1.2"/><polyline points="757,516 793,516 862,533" fill="none" stroke="#40b0d0" stroke-width="1"/><polyline points="766,515 789,515" fill="none" stroke="#e08080" stroke-width="1.2"/><g font-size="4.2" font-weight="bold" fill="#3434d2" stroke="#3434d2" stroke-width="0.4"><text transform="translate(426.9 509) rotate(-90)" textLength="15" lengthAdjust="spacingAndGlyphs">EG:6031.25</text><text transform="translate(429.3 509) rotate(-90)" textLength="13" lengthAdjust="spacingAndGlyphs">FG 6032.18</text></g><path d="M427.7 508v3" stroke="#3434d4" stroke-width="0.7"/><g font-size="4.2" font-weight="bold" fill="#3434d2" stroke="#3434d2" stroke-width="0.4"><text transform="translate(496.0 522) rotate(-90)" textLength="15" lengthAdjust="spacingAndGlyphs">EG:6031.25</text><text transform="translate(498.40000000000003 522) rotate(-90)" textLength="13" lengthAdjust="spacingAndGlyphs">FG 6032.18</text></g><path d="M496.8 521v3" stroke="#3434d4" stroke-width="0.7"/><g font-size="4.2" font-weight="bold" fill="#3434d2" stroke="#3434d2" stroke-width="0.4"><text transform="translate(514.2 517) rotate(-90)" textLength="14" lengthAdjust="spacingAndGlyphs">EG:6031.25</text><text transform="translate(516.6 517) rotate(-90)" textLength="12" lengthAdjust="spacingAndGlyphs">FG 6032.18</text></g><path d="M515 516v3" stroke="#3434d4" stroke-width="0.7"/><g font-size="4.2" font-weight="bold" fill="#3434d2" stroke="#3434d2" stroke-width="0.4"><text transform="translate(537.7 519) rotate(-90)" textLength="14" lengthAdjust="spacingAndGlyphs">EG:6031.25</text><text transform="translate(540.1 519) rotate(-90)" textLength="12" lengthAdjust="spacingAndGlyphs">FG 6032.18</text></g><path d="M538.5 518v3" stroke="#3434d4" stroke-width="0.7"/><g font-size="4.2" font-weight="bold" fill="#3434d2" stroke="#3434d2" stroke-width="0.4"><text transform="translate(546.9000000000001 519) rotate(-90)" textLength="15" lengthAdjust="spacingAndGlyphs">EG:6031.25</text><text transform="translate(549.3000000000001 519) rotate(-90)" textLength="13" lengthAdjust="spacingAndGlyphs">FG 6032.18</text></g><path d="M547.7 518v3" stroke="#3434d4" stroke-width="0.7"/><g font-size="4.2" font-weight="bold" fill="#3434d2" stroke="#3434d2" stroke-width="0.4"><text transform="translate(553.2 520) rotate(-90)" textLength="15" lengthAdjust="spacingAndGlyphs">EG:6031.25</text><text transform="translate(555.6 520) rotate(-90)" textLength="13" lengthAdjust="spacingAndGlyphs">FG 6032.18</text></g><path d="M554 519v3" stroke="#3434d4" stroke-width="0.7"/><g font-size="4.2" font-weight="bold" fill="#3434d2" stroke="#3434d2" stroke-width="0.4"><text transform="translate(585.8000000000001 519) rotate(-90)" textLength="16" lengthAdjust="spacingAndGlyphs">EG:6031.25</text><text transform="translate(588.2 519) rotate(-90)" textLength="14" lengthAdjust="spacingAndGlyphs">FG 6032.18</text></g><path d="M586.6 518v3" stroke="#3434d4" stroke-width="0.7"/><g font-size="4.2" font-weight="bold" fill="#3434d2" stroke="#3434d2" stroke-width="0.4"><text transform="translate(612.9000000000001 519) rotate(-90)" textLength="16" lengthAdjust="spacingAndGlyphs">EG:6031.25</text><text transform="translate(615.3000000000001 519) rotate(-90)" textLength="14" lengthAdjust="spacingAndGlyphs">FG 6032.18</text></g><path d="M613.7 518v3" stroke="#3434d4" stroke-width="0.7"/><g font-size="4.2" font-weight="bold" fill="#3434d2" stroke="#3434d2" stroke-width="0.4"><text transform="translate(641.0 519) rotate(-90)" textLength="17" lengthAdjust="spacingAndGlyphs">EG:6031.25</text><text transform="translate(643.4 519) rotate(-90)" textLength="15" lengthAdjust="spacingAndGlyphs">FG 6032.18</text></g><path d="M641.8 518v3" stroke="#3434d4" stroke-width="0.7"/><g font-size="4.2" font-weight="bold" fill="#3434d2" stroke="#3434d2" stroke-width="0.4"><text transform="translate(648.6 518) rotate(-90)" textLength="17" lengthAdjust="spacingAndGlyphs">EG:6031.25</text><text transform="translate(651.0 518) rotate(-90)" textLength="15" lengthAdjust="spacingAndGlyphs">FG 6032.18</text></g><path d="M649.4 517v3" stroke="#3434d4" stroke-width="0.7"/><g font-size="4.2" font-weight="bold" fill="#3434d2" stroke="#3434d2" stroke-width="0.4"><text transform="translate(656.2 519) rotate(-90)" textLength="17" lengthAdjust="spacingAndGlyphs">EG:6031.25</text><text transform="translate(658.6 519) rotate(-90)" textLength="15" lengthAdjust="spacingAndGlyphs">FG 6032.18</text></g><path d="M657 518v3" stroke="#3434d4" stroke-width="0.7"/><g font-size="4.2" font-weight="bold" fill="#3434d2" stroke="#3434d2" stroke-width="0.4"><text transform="translate(661.6 519) rotate(-90)" textLength="17" lengthAdjust="spacingAndGlyphs">EG:6031.25</text><text transform="translate(664.0 519) rotate(-90)" textLength="15" lengthAdjust="spacingAndGlyphs">FG 6032.18</text></g><path d="M662.4 518v3" stroke="#3434d4" stroke-width="0.7"/><g font-size="4.2" font-weight="bold" fill="#3434d2" stroke="#3434d2" stroke-width="0.4"><text transform="translate(690.9000000000001 518) rotate(-90)" textLength="16" lengthAdjust="spacingAndGlyphs">EG:6031.25</text><text transform="translate(693.3000000000001 518) rotate(-90)" textLength="14" lengthAdjust="spacingAndGlyphs">FG 6032.18</text></g><path d="M691.7 517v3" stroke="#3434d4" stroke-width="0.7"/><g font-size="4.2" font-weight="bold" fill="#3434d2" stroke="#3434d2" stroke-width="0.4"><text transform="translate(717.7 515) rotate(-90)" textLength="15" lengthAdjust="spacingAndGlyphs">EG:6031.25</text><text transform="translate(720.1 515) rotate(-90)" textLength="13" lengthAdjust="spacingAndGlyphs">FG 6032.18</text></g><path d="M718.5 514v3" stroke="#3434d4" stroke-width="0.7"/><g font-size="4.2" font-weight="bold" fill="#3434d2" stroke="#3434d2" stroke-width="0.4"><text transform="translate(750.2 515) rotate(-90)" textLength="15" lengthAdjust="spacingAndGlyphs">EG:6031.25</text><text transform="translate(752.6 515) rotate(-90)" textLength="13" lengthAdjust="spacingAndGlyphs">FG 6032.18</text></g><path d="M751 514v3" stroke="#3434d4" stroke-width="0.7"/><g font-size="4.2" font-weight="bold" fill="#3434d2" stroke="#3434d2" stroke-width="0.4"><text transform="translate(756.9000000000001 515) rotate(-90)" textLength="15" lengthAdjust="spacingAndGlyphs">EG:6031.25</text><text transform="translate(759.3000000000001 515) rotate(-90)" textLength="13" lengthAdjust="spacingAndGlyphs">FG 6032.18</text></g><path d="M757.7 514v3" stroke="#3434d4" stroke-width="0.7"/><g font-size="4.2" font-weight="bold" fill="#3434d2" stroke="#3434d2" stroke-width="0.4"><text transform="translate(766.0 513) rotate(-90)" textLength="16" lengthAdjust="spacingAndGlyphs">EG:6031.25</text><text transform="translate(768.4 513) rotate(-90)" textLength="14" lengthAdjust="spacingAndGlyphs">FG 6032.18</text></g><path d="M766.8 512v3" stroke="#3434d4" stroke-width="0.7"/><g font-size="4.2" font-weight="bold" fill="#3434d2" stroke="#3434d2" stroke-width="0.4"><text transform="translate(788.5 512) rotate(-90)" textLength="15" lengthAdjust="spacingAndGlyphs">EG:6031.25</text><text transform="translate(790.9 512) rotate(-90)" textLength="13" lengthAdjust="spacingAndGlyphs">FG 6032.18</text></g><path d="M789.3 511v3" stroke="#3434d4" stroke-width="0.7"/><g font-size="4.2" font-weight="bold" fill="#3434d2" stroke="#3434d2" stroke-width="0.4"><text transform="translate(861.9000000000001 535) rotate(-90)" textLength="18" lengthAdjust="spacingAndGlyphs">EG:6031.25</text><text transform="translate(864.3000000000001 535) rotate(-90)" textLength="16" lengthAdjust="spacingAndGlyphs">FG 6032.18</text></g><path d="M862.7 534v3" stroke="#3434d4" stroke-width="0.7"/><path d="M549 527.2L640 524.2" stroke="#c89060" stroke-width="0.6"/><text x="563.2" y="521.6" font-size="3.4" font-weight="bold" fill="#3434d2" textLength="8" lengthAdjust="spacingAndGlyphs">-2.00%</text><text x="590.5" y="520.7" font-size="3.4" font-weight="bold" fill="#3434d2" textLength="8" lengthAdjust="spacingAndGlyphs">-2.00%</text><text x="617.8" y="519.8" font-size="3.4" font-weight="bold" fill="#3434d2" textLength="8" lengthAdjust="spacingAndGlyphs">-2.00%</text><path d="M656 524.2L752 521.2" stroke="#c89060" stroke-width="0.6"/><text x="671.2" y="518.6" font-size="3.4" font-weight="bold" fill="#3434d2" textLength="8" lengthAdjust="spacingAndGlyphs">-2.00%</text><text x="700.0" y="517.7" font-size="3.4" font-weight="bold" fill="#3434d2" textLength="8" lengthAdjust="spacingAndGlyphs">-2.00%</text><text x="728.8" y="516.8" font-size="3.4" font-weight="bold" fill="#3434d2" textLength="8" lengthAdjust="spacingAndGlyphs">-2.00%</text><rect x="666" y="498.4" width="49" height="8.6" fill="#fff" stroke="#c04040" stroke-width="0.9"/><text x="690.5" y="506.4" font-size="10.2" fill="#c04848" text-anchor="middle" font-family="Liberation Sans" textLength="46" lengthAdjust="spacingAndGlyphs">758+00.00</text><text x="551" y="575" font-size="8.4" fill="#2a2a2e" font-family="Liberation Sans" letter-spacing="1.3" textLength="74" lengthAdjust="spacingAndGlyphs">WB  RIDGEGATE  PKWY</text><text x="667" y="575" font-size="8.4" fill="#2a2a2e" font-family="Liberation Sans" letter-spacing="1.3" textLength="74" lengthAdjust="spacingAndGlyphs">EB  RIDGEGATE  PKWY</text><rect x="367" y="515" width="30" height="28.5" rx="0.8" fill="#505050"/><rect x="368" y="515.90" width="28" height="2.7" fill="#fff"/><rect x="369" y="516.40" width="26" height="1.7" fill="#5ab06a"/><rect x="368" y="519.40" width="13.3" height="2.7" fill="#fff"/><rect x="382.5" y="519.40" width="13.5" height="2.7" fill="#fff"/><rect x="370.5" y="519.95" width="8" height="1.6" fill="#5ab06a"/><rect x="384.5" y="519.95" width="9" height="1.6" fill="#5ab06a"/><rect x="368" y="522.90" width="13.3" height="2.7" fill="#fff"/><rect x="382.5" y="522.90" width="13.5" height="2.7" fill="#fff"/><rect x="370.5" y="523.45" width="8" height="1.6" fill="#5ab06a"/><rect x="384.5" y="523.45" width="9" height="1.6" fill="#5ab06a"/><rect x="368" y="526.40" width="13.3" height="2.7" fill="#fff"/><rect x="382.5" y="526.40" width="13.5" height="2.7" fill="#fff"/><rect x="370.5" y="526.95" width="8" height="1.6" fill="#5ab06a"/><rect x="384.5" y="526.95" width="9" height="1.6" fill="#5ab06a"/><rect x="368" y="529.90" width="13.3" height="2.7" fill="#fff"/><rect x="382.5" y="529.90" width="13.5" height="2.7" fill="#fff"/><rect x="370.5" y="530.45" width="8" height="1.6" fill="#5ab06a"/><rect x="384.5" y="530.45" width="9" height="1.6" fill="#5ab06a"/><rect x="368" y="533.40" width="13.3" height="2.7" fill="#fff"/><rect x="382.5" y="533.40" width="13.5" height="2.7" fill="#fff"/><rect x="370.5" y="533.95" width="8" height="1.6" fill="#5ab06a"/><rect x="384.5" y="533.95" width="9" height="1.6" fill="#5ab06a"/><rect x="368" y="536.90" width="13.3" height="2.7" fill="#fff"/><rect x="382.5" y="536.90" width="13.5" height="2.7" fill="#fff"/><rect x="370.5" y="537.45" width="8" height="1.6" fill="#5ab06a"/><rect x="384.5" y="537.45" width="9" height="1.6" fill="#5ab06a"/><rect x="368" y="540.40" width="13.3" height="2.7" fill="#fff"/><rect x="382.5" y="540.40" width="13.5" height="2.7" fill="#fff"/><rect x="370.5" y="540.95" width="8" height="1.6" fill="#5ab06a"/><rect x="384.5" y="540.95" width="9" height="1.6" fill="#5ab06a"/><rect x="367" y="545" width="42.5" height="21.5" rx="0.8" fill="#505050"/><rect x="368" y="545.90" width="40.5" height="2.6" fill="#fff"/><rect x="377" y="546.40" width="22" height="1.6" fill="#5058c8"/><rect x="368" y="549.35" width="13.3" height="2.6" fill="#fff"/><rect x="369.4" y="549.85" width="10.5" height="1.6" fill="#5058c8"/><rect x="382.3" y="549.35" width="6.8" height="2.6" fill="#fff"/><rect x="383.7" y="549.85" width="4.0" height="1.6" fill="#5058c8"/><rect x="390" y="549.35" width="7.5" height="2.6" fill="#fff"/><rect x="391.4" y="549.85" width="4.7" height="1.6" fill="#5058c8"/><rect x="398.5" y="549.35" width="10" height="2.6" fill="#fff"/><rect x="399.9" y="549.85" width="7.2" height="1.6" fill="#5058c8"/><rect x="368" y="552.80" width="13.3" height="2.6" fill="#fff"/><rect x="369.4" y="553.30" width="10.5" height="1.6" fill="#5058c8"/><rect x="382.3" y="552.80" width="6.8" height="2.6" fill="#fff"/><rect x="383.7" y="553.30" width="4.0" height="1.6" fill="#5058c8"/><rect x="390" y="552.80" width="7.5" height="2.6" fill="#fff"/><rect x="391.4" y="553.30" width="4.7" height="1.6" fill="#5058c8"/><rect x="398.5" y="552.80" width="10" height="2.6" fill="#fff"/><rect x="399.9" y="553.30" width="7.2" height="1.6" fill="#5058c8"/><rect x="368" y="556.25" width="13.3" height="2.6" fill="#fff"/><rect x="369.4" y="556.75" width="10.5" height="1.6" fill="#5058c8"/><rect x="382.3" y="556.25" width="6.8" height="2.6" fill="#fff"/><rect x="383.7" y="556.75" width="4.0" height="1.6" fill="#5058c8"/><rect x="390" y="556.25" width="7.5" height="2.6" fill="#fff"/><rect x="391.4" y="556.75" width="4.7" height="1.6" fill="#5058c8"/><rect x="398.5" y="556.25" width="10" height="2.6" fill="#fff"/><rect x="399.9" y="556.75" width="7.2" height="1.6" fill="#5058c8"/><rect x="368" y="559.70" width="13.3" height="2.6" fill="#fff"/><rect x="369.4" y="560.20" width="10.5" height="1.6" fill="#5058c8"/><rect x="382.3" y="559.70" width="6.8" height="2.6" fill="#fff"/><rect x="383.7" y="560.20" width="4.0" height="1.6" fill="#5058c8"/><rect x="390" y="559.70" width="7.5" height="2.6" fill="#fff"/><rect x="391.4" y="560.20" width="4.7" height="1.6" fill="#5058c8"/><rect x="398.5" y="559.70" width="10" height="2.6" fill="#fff"/><rect x="399.9" y="560.20" width="7.2" height="1.6" fill="#5058c8"/><rect x="368" y="563.15" width="13.3" height="2.6" fill="#fff"/><rect x="369.4" y="563.65" width="10.5" height="1.6" fill="#5058c8"/><rect x="382.3" y="563.15" width="6.8" height="2.6" fill="#fff"/><rect x="383.7" y="563.65" width="4.0" height="1.6" fill="#5058c8"/><rect x="390" y="563.15" width="7.5" height="2.6" fill="#fff"/><rect x="391.4" y="563.65" width="4.7" height="1.6" fill="#5058c8"/><rect x="398.5" y="563.15" width="10" height="2.6" fill="#fff"/><rect x="399.9" y="563.65" width="7.2" height="1.6" fill="#5058c8"/><g fill="none" stroke="#555" stroke-width="1"><rect x="975.8" y="141.7" width="85.9" height="67"/><rect x="975.8" y="211.7" width="85.9" height="125.3"/><rect x="975.8" y="339.5" width="85.9" height="69.5"/><rect x="975.8" y="413.4" width="85.9" height="196"/></g><path d="M1000 171c5-1 12 0 18 4 6-4 13-5 18-4l-1 5c-5 1-12 3-17 8-5-5-12-7-17-8z" fill="#222218"/><path d="M1003 173c4 0 10 1 15 4 5-3 11-4 15-4l-0.5 2c-4 0-10 2-14.5 5-4.5-3-10.5-5-14.5-5z" fill="#6a8a50"/><text x="1017.5" y="171" font-size="31" font-weight="bold" fill="#c4cc4c" stroke="#1e1e18" stroke-width="3.6" stroke-linejoin="round" paint-order="stroke" text-anchor="middle" textLength="33" lengthAdjust="spacingAndGlyphs">811</text><path d="M1013 170h10v6c0 3-2 5-5 6.5-3-1.5-5-3.5-5-6.5z" fill="#a6a6ac" stroke="#222218" stroke-width="0.8"/><text x="986" y="193" font-size="5.6" font-weight="bold" fill="#1a1a1a" textLength="54" lengthAdjust="spacingAndGlyphs">Know what's <tspan font-size="7.6">below.</tspan></text><text x="996" y="201.3" font-size="5.8" font-weight="bold" fill="#1a1a1a" textLength="55" lengthAdjust="spacingAndGlyphs"><tspan font-size="9.6">Call</tspan> before you dig.</text><ellipse cx="1018.2" cy="243.3" rx="28.3" ry="26.3" fill="#fff" stroke="#3a4a88" stroke-width="1.5"/><g fill="none" stroke="#6a6a6a" stroke-width="0.8"><path d="M996 238a6 6 0 0 1 12 0z"/><circle cx="1002" cy="242" r="3.5"/><path d="M994 252c0-4 3-6 8-6s8 2 8 6z"/><path d="M1028 238a6 6 0 0 1 12 0z"/><circle cx="1034" cy="242" r="3.5"/><path d="M1026 252c0-4 3-6 8-6s8 2 8 6z"/><path d="M1009 226h18M1013 224v2M1023 224v2M1014 229h8l-1 4h-6z"/><path d="M1012 242h4l2 2h7M1012 246h4l2-2" /><path d="M1005 264h14v-6h-9zM1013 258v-5h4l2 5M1019 260l6-3 3 7h-5"/><circle cx="1009" cy="265" r="2.6"/><circle cx="1019" cy="265" r="2.6"/></g><text x="1018.8" y="278.6" font-size="7.3" font-weight="bold" fill="#4a4e58" text-anchor="middle" textLength="46" lengthAdjust="spacingAndGlyphs">CONTRACTOR</text><ellipse cx="1018" cy="309" rx="36.5" ry="14.5" fill="#fff" stroke="#c4c8cc" stroke-width="1.8"/><ellipse cx="1018" cy="309" rx="28" ry="10.5" fill="#5e665c"/><g fill="#9aa48a"><circle cx="1000" cy="309" r="2"/><circle cx="1036" cy="307" r="2.5"/><circle cx="1030" cy="314" r="2"/><circle cx="1006" cy="314" r="1.8"/></g><g fill="#c8a868"><circle cx="1004" cy="305" r="1.2"/><circle cx="1034" cy="311" r="1.2"/></g><path d="M1002 286h12v21h-12z" fill="#6a7078"/><path d="M1004 289h3v16h-3z" fill="#8e949c"/><path d="M1014 283h4v24h-4z" fill="#a4aab0"/><path d="M1022 288l9-5v23h-9z" fill="#7a8088"/><path d="M1031 283l2 1v22h-2z" fill="#b0b6bc"/><path d="M998 316l30-9 6 3-29 9z" fill="#58c0ea"/><path d="M1004 315l22-6" stroke="#c8f0ff" stroke-width="0.8"/><text x="1018.7" y="335.8" font-size="7" font-weight="bold" fill="#a0a4ac" stroke="#70747c" stroke-width="0.35" text-anchor="middle" textLength="75" lengthAdjust="spacingAndGlyphs">ENGINEERING &amp; DESIGN</text><g stroke="#9a4aa0" stroke-width="0.7"><path d="M987.4 413.4V462M1023.7 413.4V462M1035.7 413.4V462"/></g><g stroke="#9ab0e0" stroke-width="0.6"><path d="M976 426.7H1061.7"/><path d="M976 432H1061.7"/><path d="M976 436.5H1061.7"/><path d="M976 440.6H1061.7"/><path d="M976 445H1061.7"/><path d="M976 449H1061.7"/><path d="M976 453H1061.7"/><path d="M976 457H1061.7"/></g><g fill="#d020d0"><rect x="979" y="414.5" width="4.5" height="3"/><rect x="997" y="414.5" width="14" height="3"/><rect x="1026" y="414.5" width="4" height="3"/><rect x="1042" y="414.5" width="4" height="3"/></g><g font-size="5" fill="#1a1a1a" font-weight="bold"><text x="980.5" y="424">1</text><text x="991" y="424" textLength="28" lengthAdjust="spacingAndGlyphs">IFC  -  100%</text><text x="1025" y="424" textLength="10" lengthAdjust="spacingAndGlyphs">ABC</text><text x="1038" y="424" textLength="23" lengthAdjust="spacingAndGlyphs">07/10/21</text></g><path d="M976 462.5H1061.7M976 485.2H1061.7M976 519.2H1061.7M976 553.5H1061.7M976 574.6H1061.7M976 585.6H1061.7M976 595.6H1061.7" stroke="#9a4aa0" stroke-width="0.8"/><path d="M976 464.2H1061.7" stroke="#555" stroke-width="0.6"/><path d="M977 478l6-7h6v7h-3.5v-4h-2l-3 4z" fill="#111"/><text x="992" y="478" font-size="11.5" font-weight="bold" fill="#111" textLength="70" lengthAdjust="spacingAndGlyphs">AUTODESK</text><text x="997" y="483.5" font-size="3.8" fill="#333" textLength="37" lengthAdjust="spacingAndGlyphs">www.autodesk.com</text><g fill="#d020d0"><rect x="977" y="486.5" width="15" height="2.6"/><rect x="977" y="520.5" width="8" height="2.4"/><rect x="977" y="555" width="11" height="2.4"/><rect x="977" y="575.3" width="16" height="2.4"/><rect x="1005" y="575.3" width="20" height="2.4"/><rect x="1035" y="575.3" width="9" height="2.4"/><rect x="977" y="586.3" width="10" height="2.4"/><rect x="1020" y="586.3" width="28" height="2.4"/><rect x="977" y="596.3" width="24" height="2.8"/><rect x="1050" y="596.3" width="6" height="2.8"/></g><path d="M1003.4 574.6V585.6M1035 574.6V585.6M1018.5 585.6V595.6M1046 595.6V609" stroke="#9a4aa0" stroke-width="0.7"/><text x="1018.5" y="501.3" font-size="11" font-style="italic" fill="#222" text-anchor="middle" textLength="51" lengthAdjust="spacingAndGlyphs">RIDGEGATE</text><text x="1018" y="514" font-size="11" font-style="italic" fill="#222" text-anchor="middle" textLength="44" lengthAdjust="spacingAndGlyphs">PARKWAY</text><g font-size="8" fill="#222" text-anchor="middle"><text x="1017.5" y="530" textLength="33" lengthAdjust="spacingAndGlyphs">ROADWAY</text><text x="1017.5" y="539.5" textLength="23" lengthAdjust="spacingAndGlyphs">CROSS</text><text x="1018.5" y="549.5" textLength="33" lengthAdjust="spacingAndGlyphs">SECTIONS</text></g><text x="1017" y="568" font-size="13.5" font-style="italic" fill="#222" text-anchor="middle" textLength="38" lengthAdjust="spacingAndGlyphs">ST-DOT</text><g font-size="5.4" fill="#1a1a1a"><text x="983" y="584.3" textLength="11" lengthAdjust="spacingAndGlyphs">ABC</text><text x="1011" y="584.3" textLength="11" lengthAdjust="spacingAndGlyphs">ZYX</text><text x="1036" y="584.3" textLength="25" lengthAdjust="spacingAndGlyphs">07/10/21</text><text x="985" y="595" textLength="15" lengthAdjust="spacingAndGlyphs">1"=10'</text><text x="1021" y="595" textLength="37" lengthAdjust="spacingAndGlyphs">20210710-RG</text></g><text x="996" y="607" font-size="9.6" fill="#333" textLength="28" lengthAdjust="spacingAndGlyphs">XS-16</text></svg>
<div class="a" style="left:0px;top:120px;width:163px;height:12px;background:#2c313c;"></div>
<div class="a" style="left:0px;top:132px;width:163px;height:20px;background:#3a404d;"></div>
<div class="a" style="left:163px;top:120px;width:16px;height:506px;background:#3b414e;"></div>
<div class="a" style="left:177px;top:119px;width:2px;height:507px;background:#2b303a;"></div>
<div class="t" style="left:4px;top:122.2px;font-size:6.9px;color:#d8dbe0;font-weight:normal;font-style:normal;">TOOLSPACE</div>
<svg class="a" style="left:0;top:132px" width="163" height="20"><rect x="-2" y="5" width="10" height="10" fill="#cfd3d8"/><ellipse cx="2.5" cy="10" rx="4" ry="3" fill="#3a9a4a"/><rect x="116" y="5" width="3.5" height="3.5" fill="#e0e2e6"/><rect x="121" y="10" width="3.5" height="4" fill="#e0e2e6"/><rect x="116" y="10" width="3.5" height="4" fill="#e0e2e6"/><path d="M120 6h3v3" stroke="#e0e2e6" fill="none" stroke-width="0.8"/><rect x="132" y="5" width="11" height="9" fill="#d8dade"/><rect x="139" y="7" width="2.5" height="6" fill="#3a404d"/><circle cx="154.5" cy="9.5" r="5" fill="#e6e7ea"/></svg>
<div class="t" style="left:152.2px;top:137.8px;font-size:7.6px;color:#3a404d;font-weight:bold;font-style:normal;">?</div>
<div class="a" style="left:0px;top:152px;width:163px;height:13px;background:#e4e4e6;border-bottom:1px solid #b0b4ba"></div>
<div class="t" style="left:-1.5px;top:154.8px;font-size:7.4px;color:#3c3f44;font-weight:normal;font-style:normal;">ctive Drawing View</div>
<svg class="a" style="left:153px;top:155px" width="9" height="7"><path d="M1.5 2l3 3 3-3" stroke="#555" fill="none" stroke-width="0.9"/></svg>
<div class="a" style="left:0px;top:165px;width:163px;height:385px;background:#ffffff;"></div>
<div class="a" style="left:0px;top:539px;width:163px;height:11px;background:#f0f0f1;"></div>
<div class="a" style="left:7px;top:540px;width:47px;height:9px;background:#cfcfd3;"></div>
<svg class="a" style="left:0;top:539px" width="163" height="11"><path d="M4 3l-2.5 2.5 2.5 2.5M156 3l2.5 2.5-2.5 2.5" stroke="#555" fill="none" stroke-width="1"/></svg>
<div class="a" style="left:0px;top:550px;width:163px;height:5px;background:#2e333e;"></div>
<div class="a" style="left:0px;top:555px;width:163px;height:71px;background:#3e4452;border-top:1px solid #5b616c;border-right:1px solid #5b616c"></div>
<svg class="a" style="left:0;top:0" width="163" height="550"><g stroke="#9a9a9a" stroke-width="0.8" fill="none"><path d="M3.5 178v225.5M16.5 180v211M16.5 408v72"/><path d="M3.5 174.5h9"/><path d="M16.5 187h5"/><path d="M16.5 200h5"/><path d="M16.5 212.5h5"/><path d="M16.5 225h5"/><path d="M16.5 238h5"/><path d="M16.5 251h5"/><path d="M16.5 263.5h5"/><path d="M16.5 276h5"/><path d="M16.5 289h5"/><path d="M16.5 301.5h5"/><path d="M16.5 314.5h5"/><path d="M16.5 327h5"/><path d="M16.5 340h5"/><path d="M16.5 352.5h5"/><path d="M16.5 365.5h5"/><path d="M16.5 378h5"/><path d="M16.5 391h5"/><path d="M3.5 403.5h9"/><path d="M16.5 416.5h5"/><path d="M16.5 429h5"/><path d="M16.5 442h5"/><path d="M16.5 455h5"/><path d="M16.5 467.5h5"/><path d="M16.5 480h5"/></g><rect x="1.5" y="172.0" width="5" height="5" fill="#fff" stroke="#9a9a9a" stroke-width="0.8"/><path d="M2.5 174.5h3" stroke="#444" stroke-width="0.8"/><path d="M13 175.5a3 3 0 0 1 3-4a3.5 3.5 0 0 1 6 0a2.5 2.5 0 0 1 1 4z" fill="#4aa0d8"/><path d="M17 179.5l3-4 1.5 1-3 4z" fill="#e0b040"/><circle cx="21" cy="174.5" r="1" fill="#d03030"/><g stroke="#6e7278" stroke-width="0.9" fill="none"><path d="M24.5 187h10M29.5 182v10"/><path d="M26.5 187l3-3 3 3-3 3z" fill="#d8dadf"/></g><g stroke="#6e7278" stroke-width="0.9" fill="none"><path d="M26.5 195h-2v10h2M32.5 195h2v10h-2"/><path d="M27.5 200l2-2 2 2-2 2z" fill="#c8cad0"/></g><rect x="13.5" y="210.0" width="5" height="5" fill="#fff" stroke="#9a9a9a" stroke-width="0.8"/><path d="M14.5 212.5h3" stroke="#444" stroke-width="0.8"/><path d="M16 211.0v3" stroke="#444" stroke-width="0.8"/><g stroke="#6e7278" stroke-width="0.9" fill="#e8e8ea"><path d="M24.5 216.5l1-6 4-3 5 3 1 6z"/><path d="M27.5 215.5l2-4 2 4z" fill="none"/></g><rect x="13.5" y="222.5" width="5" height="5" fill="#fff" stroke="#9a9a9a" stroke-width="0.8"/><path d="M14.5 225h3" stroke="#444" stroke-width="0.8"/><path d="M16 223.5v3" stroke="#444" stroke-width="0.8"/><g stroke="#6e7278" stroke-width="1" fill="none" stroke-dasharray="1.5 1"><path d="M24.5 222h4c4 0 5 3 2 6h-5"/></g><rect x="13.5" y="235.5" width="5" height="5" fill="#fff" stroke="#9a9a9a" stroke-width="0.8"/><path d="M14.5 238h3" stroke="#444" stroke-width="0.8"/><path d="M16 236.5v3" stroke="#444" stroke-width="0.8"/><g stroke="#6e7278" stroke-width="1" fill="none"><path d="M24.5 242c4 0 6-3 7-8"/><path d="M30.5 233l2 0 0 2" /></g><rect x="24.5" y="246" width="10" height="9" fill="#8aa0b8" stroke="#6e7278" stroke-width="0.8"/><path d="M25.5 254l4-4 4 2" stroke="#fff" stroke-width="0.8" fill="none"/><rect x="13.5" y="261.0" width="5" height="5" fill="#fff" stroke="#9a9a9a" stroke-width="0.8"/><path d="M14.5 263.5h3" stroke="#444" stroke-width="0.8"/><path d="M16 262.0v3" stroke="#444" stroke-width="0.8"/><g stroke="#4a8ad0" stroke-width="1" fill="none"><path d="M24.5 268.5l4-9M26.5 264.5h8M31.5 259.5l3 2"/></g><rect x="24.5" y="271" width="10" height="9" fill="#f0c070" stroke="#6e7278" stroke-width="0.8"/><path d="M24.5 277l5-3 5 2v4h-10z" fill="#70b070"/><path d="M28.5 271l1 9" stroke="#4a8ad0"/><rect x="13.5" y="286.5" width="5" height="5" fill="#fff" stroke="#9a9a9a" stroke-width="0.8"/><path d="M14.5 289h3" stroke="#444" stroke-width="0.8"/><path d="M16 287.5v3" stroke="#444" stroke-width="0.8"/><g stroke="#6e7278" stroke-width="1.1" fill="none"><path d="M24.5 294v-9h4v9M30.5 294v-6h4v6"/></g><g stroke="#6e7278" stroke-width="1.1" fill="none"><path d="M24.5 306.5v-9h4v9M30.5 306.5v-6h4v6"/></g><g stroke="#6e7278" stroke-width="1" fill="none"><path d="M23.5 314.5h12M26.5 312.5v4M32.5 312.5v4"/><circle cx="29.5" cy="314.5" r="1.5"/></g><rect x="13.5" y="324.5" width="5" height="5" fill="#fff" stroke="#9a9a9a" stroke-width="0.8"/><path d="M14.5 327h3" stroke="#444" stroke-width="0.8"/><path d="M16 325.5v3" stroke="#444" stroke-width="0.8"/><path d="M24.5 332l3-10h2l3 10z" fill="#b89a50" stroke="#6e7278" stroke-width="0.6"/><path d="M29.5 323v8" stroke="#f0e0a0" stroke-width="0.7"/><rect x="13.5" y="337.5" width="5" height="5" fill="#fff" stroke="#9a9a9a" stroke-width="0.8"/><path d="M14.5 340h3" stroke="#444" stroke-width="0.8"/><path d="M16 338.5v3" stroke="#444" stroke-width="0.8"/><g stroke="#6e7278" stroke-width="0.9" fill="#e6e6e8"><path d="M24.5 344h10v-4l-5-3-5 3z"/><path d="M24.5 341h10M29.5 337v7" fill="none"/></g><rect x="13.5" y="350.0" width="5" height="5" fill="#fff" stroke="#9a9a9a" stroke-width="0.8"/><path d="M14.5 352.5h3" stroke="#444" stroke-width="0.8"/><path d="M16 351.0v3" stroke="#444" stroke-width="0.8"/><g stroke="#6e7278" stroke-width="0.9" fill="#e6e6e8"><path d="M24.5 356.5h10v-4l-5-3-5 3z"/><path d="M24.5 353.5h10M29.5 349.5v7" fill="none"/></g><circle cx="29.5" cy="365.5" r="4.5" fill="#c8cacf" stroke="#6e7278" stroke-width="0.8"/><path d="M25.0 365.5h9M29.5 361.0v9" stroke="#6e7278" stroke-width="0.9"/><rect x="13.5" y="375.5" width="5" height="5" fill="#fff" stroke="#9a9a9a" stroke-width="0.8"/><path d="M14.5 378h3" stroke="#444" stroke-width="0.8"/><path d="M16 376.5v3" stroke="#444" stroke-width="0.8"/><g stroke="#6e7278" stroke-width="1" fill="none"><path d="M25.5 383l3-8M31.5 383l-1-8M26.5 374h5"/><rect x="26.5" y="372" width="4" height="3" fill="#6e7278"/></g><rect x="24.5" y="386" width="10" height="9" fill="#fff" stroke="#6e7278" stroke-width="0.9"/><rect x="26.5" y="388" width="6" height="5" fill="#7aa0d0"/><rect x="1.5" y="401.0" width="5" height="5" fill="#fff" stroke="#9a9a9a" stroke-width="0.8"/><path d="M2.5 403.5h3" stroke="#444" stroke-width="0.8"/><path d="M13 404.5a3 3 0 0 1 3-4a3.5 3.5 0 0 1 6 0a2.5 2.5 0 0 1 1 4z" fill="#4aa0d8"/><rect x="18" y="403.5" width="5" height="5" fill="#fff" stroke="#666" stroke-width="0.8"/><rect x="13.5" y="414.0" width="5" height="5" fill="#fff" stroke="#9a9a9a" stroke-width="0.8"/><path d="M14.5 416.5h3" stroke="#444" stroke-width="0.8"/><path d="M16 415.0v3" stroke="#444" stroke-width="0.8"/><g stroke="#6e7278" stroke-width="0.9" fill="#e8e8ea"><path d="M24.5 420.5l1-6 4-3 5 3 1 6z"/><path d="M27.5 419.5l2-4 2 4z" fill="none"/></g><rect x="31" y="417.0" width="4" height="4.5" fill="#fff" stroke="#777" stroke-width="0.6"/><rect x="13.5" y="426.5" width="5" height="5" fill="#fff" stroke="#9a9a9a" stroke-width="0.8"/><path d="M14.5 429h3" stroke="#444" stroke-width="0.8"/><path d="M16 427.5v3" stroke="#444" stroke-width="0.8"/><g stroke="#6e7278" stroke-width="1" fill="none" stroke-dasharray="1.5 1"><path d="M24.5 426h4c4 0 5 3 2 6h-5"/></g><rect x="31" y="429.5" width="4" height="4.5" fill="#fff" stroke="#777" stroke-width="0.6"/><rect x="13.5" y="439.5" width="5" height="5" fill="#fff" stroke="#9a9a9a" stroke-width="0.8"/><path d="M14.5 442h3" stroke="#444" stroke-width="0.8"/><path d="M16 440.5v3" stroke="#444" stroke-width="0.8"/><g stroke="#6e7278" stroke-width="1.1" fill="none"><path d="M24.5 447v-9h4v9M30.5 447v-6h4v6"/></g><rect x="31" y="442.5" width="4" height="4.5" fill="#fff" stroke="#777" stroke-width="0.6"/><g stroke="#6e7278" stroke-width="1.1" fill="none"><path d="M24.5 460v-9h4v9M30.5 460v-6h4v6"/></g><rect x="31" y="455.5" width="4" height="4.5" fill="#fff" stroke="#777" stroke-width="0.6"/><path d="M24.5 472.5l3-10h2l3 10z" fill="#b89a50" stroke="#6e7278" stroke-width="0.6"/><path d="M29.5 463.5v8" stroke="#f0e0a0" stroke-width="0.7"/><rect x="31" y="468.0" width="4" height="4.5" fill="#fff" stroke="#777" stroke-width="0.6"/><rect x="24.5" y="475" width="10" height="9" fill="#fff" stroke="#6e7278" stroke-width="0.9"/><rect x="26.5" y="477" width="6" height="5" fill="#7aa0d0"/><rect x="31" y="480.5" width="4" height="4.5" fill="#fff" stroke="#777" stroke-width="0.6"/></svg>
<div class="t" style="left:26px;top:170.5px;font-size:7.5px;color:#1a1a1a;font-weight:bold;font-style:normal;letter-spacing:-0.12px">[CLOUD]RidgeGate_Sections</div>
<div class="t" style="left:38px;top:183px;font-size:7.5px;color:#202020;font-weight:normal;font-style:normal;">Points</div>
<div class="t" style="left:38px;top:196px;font-size:7.5px;color:#202020;font-weight:normal;font-style:normal;">Point Groups</div>
<div class="t" style="left:38px;top:208.5px;font-size:7.5px;color:#202020;font-weight:normal;font-style:normal;">Surfaces</div>
<div class="t" style="left:38px;top:221px;font-size:7.5px;color:#202020;font-weight:normal;font-style:normal;">Alignments</div>
<div class="t" style="left:38px;top:234px;font-size:7.5px;color:#202020;font-weight:normal;font-style:normal;">Feature Lines</div>
<div class="t" style="left:38px;top:247px;font-size:7.5px;color:#202020;font-weight:normal;font-style:normal;">Sites</div>
<div class="t" style="left:38px;top:259.5px;font-size:7.5px;color:#202020;font-weight:normal;font-style:normal;">Turnouts and Crossovers</div>
<div class="t" style="left:38px;top:272px;font-size:7.5px;color:#202020;font-weight:normal;font-style:normal;">Catchments</div>
<div class="t" style="left:38px;top:285px;font-size:7.5px;color:#202020;font-weight:normal;font-style:normal;">Pipe Networks</div>
<div class="t" style="left:38px;top:297.5px;font-size:7.5px;color:#202020;font-weight:normal;font-style:normal;">Pressure Networks</div>
<div class="t" style="left:38px;top:310.5px;font-size:7.5px;color:#202020;font-weight:normal;font-style:normal;">Bridges</div>
<div class="t" style="left:38px;top:323px;font-size:7.5px;color:#202020;font-weight:normal;font-style:normal;">Corridors</div>
<div class="t" style="left:38px;top:336px;font-size:7.5px;color:#202020;font-weight:normal;font-style:normal;">Assemblies</div>
<div class="t" style="left:38px;top:348.5px;font-size:7.5px;color:#202020;font-weight:normal;font-style:normal;">Subassemblies</div>
<div class="t" style="left:38px;top:361.5px;font-size:7.5px;color:#202020;font-weight:normal;font-style:normal;">Intersections</div>
<div class="t" style="left:38px;top:374px;font-size:7.5px;color:#202020;font-weight:normal;font-style:normal;">Survey</div>
<div class="t" style="left:38px;top:387px;font-size:7.5px;color:#202020;font-weight:normal;font-style:normal;">View Frame Groups</div>
<div class="t" style="left:26px;top:399.5px;font-size:7.5px;color:#202020;font-weight:normal;font-style:normal;">Data Shortcuts [Autodesk Docs:\Infrast...</div>
<div class="t" style="left:38px;top:412.5px;font-size:7.5px;color:#202020;font-weight:normal;font-style:normal;">Surfaces</div>
<div class="t" style="left:38px;top:425px;font-size:7.5px;color:#202020;font-weight:normal;font-style:normal;">Alignments</div>
<div class="t" style="left:38px;top:438px;font-size:7.5px;color:#202020;font-weight:normal;font-style:normal;">Pipe Networks</div>
<div class="t" style="left:38px;top:451px;font-size:7.5px;color:#202020;font-weight:normal;font-style:normal;">Pressure Networks</div>
<div class="t" style="left:38px;top:463.5px;font-size:7.5px;color:#202020;font-weight:normal;font-style:normal;">Corridors</div>
<div class="t" style="left:38px;top:476px;font-size:7.5px;color:#202020;font-weight:normal;font-style:normal;">View Frame Groups</div>
<div class="a" style="left:164px;top:134px;width:14px;height:75px;background:#404654;"></div>
<div class="a" style="left:164px;top:211px;width:14px;height:76px;background:#30353f;"></div>
<div class="a" style="left:164px;top:289px;width:14px;height:75px;background:#30353f;"></div>
<div class="a" style="left:164px;top:366px;width:14px;height:76px;background:#30353f;"></div>
<div class="t" style="left:171px;top:172px;font-size:7.6px;color:#e6e8ec;transform:translate(-50%,-50%) rotate(-90deg);transform-origin:center">Prospector</div>
<div class="t" style="left:171px;top:253px;font-size:7.6px;color:#b8bcc4;transform:translate(-50%,-50%) rotate(-90deg);transform-origin:center">Settings</div>
<div class="t" style="left:171px;top:327px;font-size:7.6px;color:#b8bcc4;transform:translate(-50%,-50%) rotate(-90deg);transform-origin:center">Survey</div>
<div class="t" style="left:171px;top:412px;font-size:7.6px;color:#b8bcc4;transform:translate(-50%,-50%) rotate(-90deg);transform-origin:center">Toolbox</div>
</body></html>
